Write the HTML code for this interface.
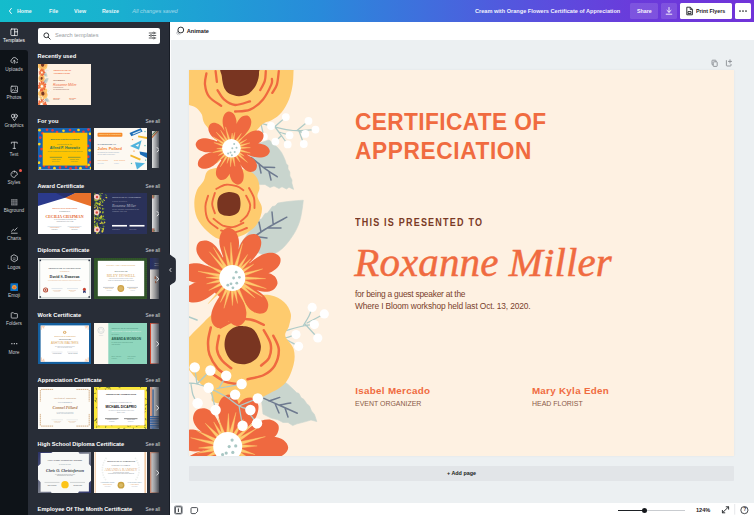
<!DOCTYPE html>
<html lang="en">
<head>
<meta charset="utf-8">
<title>Cream with Orange Flowers Certificate of Appreciation</title>
<style>
*{box-sizing:border-box;margin:0;padding:0}
html,body{width:754px;height:515px;overflow:hidden;background:#ecf0f2;font-family:"Liberation Sans",sans-serif;}
body{position:relative}
#cert{position:absolute;left:189px;top:70.4px;width:545px;height:385.4px;background:#fef1e2;overflow:hidden;box-shadow:0 0 2px rgba(0,0,0,.06)}
#cert div{position:absolute;white-space:nowrap;line-height:1}
#cert #ci{left:0;top:-.4px;width:545px;height:386px}
#cert div{transform-origin:0 0}
#cert .t1{color:#f06b40;font-weight:bold}
#cert .t2{color:#7a3a26;font-weight:bold}
#cert .nm{color:#f06b40;font-style:italic;font-family:"Liberation Serif",serif;-webkit-text-stroke:.45px #f06b40}
#cert .bd{color:#7a3f2c}
#cert .sg{color:#f06b40;font-weight:bold}
#cert .rl{color:#8a5a48}
#addpage{position:absolute;left:189px;top:465.7px;width:545px;height:15.3px;background:#e2e5e8;border-radius:1px;text-align:center;font-size:5.4px;line-height:15px;color:#1a1d21;font-weight:bold}

#topbar{position:absolute;left:0;top:0;width:754px;height:21.5px;background:linear-gradient(90deg,#14bccc 0%,#19b2cf 14%,#1f9fd5 28%,#288bda 42%,#3f6fdd 56%,#5752de 70%,#6a3bdb 84%,#7033d9 100%);color:#fff;font-size:5.6px;font-weight:bold}
#topbar span.w{opacity:.9}
#topbar span{position:absolute;top:7px;line-height:8px;white-space:nowrap;transform-origin:0 50%;transform:scaleX(.95)}
#topbar .btn{position:absolute;top:3px;height:15.5px;border-radius:1.5px}
#canvasbar{position:absolute;left:170px;top:21.5px;width:584px;height:18.8px;background:#fff}
#canvasbar span{position:absolute;left:16.7px;top:5.2px;font-size:5.65px;line-height:8px;font-weight:bold;color:#1d2024}
#bottom{position:absolute;left:169.8px;top:502.6px;width:585px;height:12.4px;background:#fff}
#bottom span{position:absolute;left:527px;top:4px;font-size:5.6px;line-height:7px;color:#1d2024;font-weight:bold;transform-origin:0 50%}
#vline{position:absolute;left:169.8px;top:40px;width:1.4px;height:463px;background:#fdfdfe}

#rail{position:absolute;left:0;top:21.5px;width:28px;height:493.5px;background:#0e1318}
#rail .act{position:absolute;left:0;top:0;width:28px;height:28px;background:#282d37}
#rail .crn{position:absolute;left:0;top:28px;width:28px;height:10px;background:#0e1318;border-top-right-radius:3px;box-shadow:0 -3px 0 0 #282d37}
#rail .ic{position:absolute;left:9.7px}
#rail .it{position:absolute;left:0;width:28px;text-align:center;color:#c9ccd0;font-size:4.8px;line-height:6px;white-space:nowrap}
#rail .it.on{color:#fff}
#rail .dot{position:absolute;left:19px;top:147.2px;width:3px;height:3px;border-radius:50%;background:#f2584c}
#panel{position:absolute;left:28px;top:21.5px;width:141.8px;height:493.5px;background:#282d37;overflow:hidden;border-right:1.6px solid #171c25}
#search{position:absolute;left:9.5px;top:6.3px;width:122.5px;height:16px;background:#fff;border-radius:2px}
#search span{position:absolute;left:17.5px;top:4.6px;font-size:5.6px;line-height:7px;color:#9a9da3;white-space:nowrap}
.sec{position:absolute;left:9.6px;color:#fff;font-size:5.7px;font-weight:bold;line-height:7px;white-space:nowrap}
.seeall{position:absolute;left:117.6px;color:#d4d7db;font-size:4.75px;line-height:7px;white-space:nowrap}
.th{position:absolute;width:53.5px;height:41.4px;overflow:hidden;background:#fff}
.th svg{display:block}
.th3{width:7.6px;height:37px;background:none}
</style>
</head>
<body>
<div id="topbar">
<svg width="10" height="10" viewBox="0 0 10 10" style="position:absolute;left:6px;top:6px"><path d="M5.4,2.4L3.4,5L5.4,7.6" fill="none" stroke="#fff" stroke-width="1" stroke-linecap="round" stroke-linejoin="round" opacity=".9"/></svg>
<span class="w" style="left:17px">Home</span>
<span class="w" style="left:49px">File</span>
<span class="w" style="left:74px">View</span>
<span class="w" style="left:102px">Resize</span>
<span style="left:132.3px;font-weight:normal;font-style:italic;opacity:.55;transform:none">All changes saved</span>
<span style="left:475px;opacity:.92;transform:none">Cream with Orange Flowers Certificate of Appreciation</span>
<div class="btn" style="left:630px;width:28px;background:rgba(255,255,255,.13)"></div>
<span style="left:636.6px;opacity:.95">Share</span>
<div class="btn" style="left:661.3px;width:16px;background:rgba(255,255,255,.13)"></div>
<svg width="10" height="10" viewBox="0 0 10 10" style="position:absolute;left:664.3px;top:5.8px"><path d="M5,1.5V6.2M3,4.4L5,6.3L7,4.4M2.2,8.2H7.8" fill="none" stroke="#fff" stroke-width="0.9" stroke-linecap="round" stroke-linejoin="round"/></svg>
<div class="btn" style="left:680px;width:52px;background:#fff"></div>
<svg width="9" height="10" viewBox="0 0 9 10" style="position:absolute;left:684.5px;top:5.8px"><path d="M1.8,1.2H5.4L7.4,3.2V8.8H1.8ZM5.2,1.4V3.4H7.2M3,5.6H6V7.6H3Z" fill="none" stroke="#1d2024" stroke-width="0.9" stroke-linejoin="round"/></svg>
<span style="left:696px;color:#1d2024">Print Flyers</span>
<div class="btn" style="left:735px;width:15.8px;background:#fff"></div>
<svg width="10" height="4" viewBox="0 0 10 4" style="position:absolute;left:738px;top:8.8px"><circle cx="2" cy="2" r=".85" fill="#1d2024"/><circle cx="5" cy="2" r=".85" fill="#1d2024"/><circle cx="8" cy="2" r=".85" fill="#1d2024"/></svg>
</div>
<svg width="0" height="0" style="position:absolute"><defs><linearGradient id="fade" x1="0" y1="0" x2="1" y2="0"><stop offset="0" stop-color="#282d37" stop-opacity=".06"/><stop offset=".5" stop-color="#3a3f48" stop-opacity=".45"/><stop offset="1" stop-color="#282d37" stop-opacity=".85"/></linearGradient></defs></svg>
<div id="rail"><div class="act"></div><div class="crn"></div>
<svg class="ic" width="8.6" height="8.6" viewBox="0 0 10 10" style="top:6.5px"><rect x="1" y="1.2" width="8" height="7.6" rx="1" fill="none" stroke="#fff" stroke-width=".9" stroke-linecap="round" stroke-linejoin="round"/><path d="M5.4,1.4V8.6M5.4,4.4H8.8" fill="none" stroke="#fff" stroke-width=".9" stroke-linecap="round" stroke-linejoin="round"/></svg>
<div class="it on" style="top:16.01px">Templates</div>
<svg class="ic" width="8.6" height="8.6" viewBox="0 0 10 10" style="top:34.8px"><path d="M3,7.8H2.8A2,2 0 0 1 2.4,3.9A2.8,2.8 0 0 1 7.8,3.6A2.1,2.1 0 0 1 7.4,7.8H7M5,8.6V5M3.7,6.2L5,4.9L6.3,6.2" fill="none" stroke="#d3d6da" stroke-width=".9" stroke-linecap="round" stroke-linejoin="round"/></svg>
<div class="it" style="top:45.01px">Uploads</div>
<svg class="ic" width="8.6" height="8.6" viewBox="0 0 10 10" style="top:63.1px"><rect x="1.2" y="1.4" width="7.6" height="7.2" rx="1" fill="none" stroke="#d3d6da" stroke-width=".9" stroke-linecap="round" stroke-linejoin="round"/><path d="M1.6,7.4L3.8,5.2L5.4,6.8L6.6,5.8L8.6,7.6" fill="none" stroke="#d3d6da" stroke-width=".9" stroke-linecap="round" stroke-linejoin="round"/><circle cx="6.4" cy="3.6" r=".7" fill="#d3d6da"/></svg>
<div class="it" style="top:73.01px">Photos</div>
<svg class="ic" width="8.6" height="8.6" viewBox="0 0 10 10" style="top:91.4px"><circle cx="3.6" cy="3.4" r="2" fill="none" stroke="#d3d6da" stroke-width=".9" stroke-linecap="round" stroke-linejoin="round"/><circle cx="6.6" cy="3.4" r="2" fill="none" stroke="#d3d6da" stroke-width=".9" stroke-linecap="round" stroke-linejoin="round"/><path d="M2.6,5.4L5.1,9L7.6,5.4" fill="none" stroke="#d3d6da" stroke-width=".9" stroke-linecap="round" stroke-linejoin="round"/></svg>
<div class="it" style="top:101.01px">Graphics</div>
<svg class="ic" width="8.6" height="8.6" viewBox="0 0 10 10" style="top:119.7px"><path d="M1.6,2.8V1.4H8.4V2.8M5,1.4V8.6M3.6,8.6H6.4" fill="none" stroke="#d3d6da" stroke-width=".9" stroke-linecap="round" stroke-linejoin="round"/></svg>
<div class="it" style="top:130.01px">Text</div>
<svg class="ic" width="8.6" height="8.6" viewBox="0 0 10 10" style="top:148px"><path d="M5,1.4A3.6,3.6 0 1 0 5.6,8.5C6.6,8.3 5.6,7 6.6,6.4C7.4,6 8.6,6.4 8.6,4.8A3.6,3.6 0 0 0 5,1.4Z" fill="none" stroke="#d3d6da" stroke-width=".9" stroke-linecap="round" stroke-linejoin="round"/><circle cx="3.4" cy="4" r=".5" fill="#d3d6da"/><circle cx="5.2" cy="3" r=".5" fill="#d3d6da"/></svg>
<div class="it" style="top:158.01px">Styles</div>
<svg class="ic" width="8.6" height="8.6" viewBox="0 0 10 10" style="top:176.3px"><rect x="1.4" y="1.4" width="7.2" height="7.2" fill="#9a9da2"/><path d="M1.4,3.2H8.6M1.4,5H8.6M1.4,6.8H8.6M3.2,1.4V8.6M5,1.4V8.6M6.8,1.4V8.6" stroke="#0e1318" stroke-width=".5"/></svg>
<div class="it" style="top:186.01px">Bkground</div>
<svg class="ic" width="8.6" height="8.6" viewBox="0 0 10 10" style="top:204.6px"><path d="M1.6,6.2L3.8,4L5.4,5.2L8.2,2.2M1.6,8.4H8.4" fill="none" stroke="#d3d6da" stroke-width=".9" stroke-linecap="round" stroke-linejoin="round"/></svg>
<div class="it" style="top:214.01px">Charts</div>
<svg class="ic" width="8.6" height="8.6" viewBox="0 0 10 10" style="top:232.9px"><path d="M5,1L8.6,3V7L5,9L1.4,7V3Z" fill="none" stroke="#d3d6da" stroke-width=".9" stroke-linecap="round" stroke-linejoin="round"/><path d="M3.4,5.6A1.7,1.4 0 0 0 6.6,5.6M3.4,4.6H6.6" fill="none" stroke="#d3d6da" stroke-width=".6"/></svg>
<div class="it" style="top:243.01px">Logos</div>
<svg class="ic" width="8.6" height="8.6" viewBox="0 0 10 10" style="top:261.2px"><rect x=".4" y=".4" width="9.2" height="9.2" rx=".8" fill="#0b6fc2"/><circle cx="5" cy="5" r="2.7" fill="#f2a23a"/><circle cx="5" cy="5.2" r="1.5" fill="#e0703a"/></svg>
<div class="it" style="top:271.01px">Emoji</div>
<svg class="ic" width="8.6" height="8.6" viewBox="0 0 10 10" style="top:289.5px"><path d="M1.4,2.6Q1.4,2 2,2H4L4.9,3H8Q8.6,3 8.6,3.6V7.6Q8.6,8.2 8,8.2H2Q1.4,8.2 1.4,7.6Z" fill="none" stroke="#d3d6da" stroke-width=".9" stroke-linecap="round" stroke-linejoin="round"/></svg>
<div class="it" style="top:299.01px">Folders</div>
<svg class="ic" width="8.6" height="8.6" viewBox="0 0 10 10" style="top:317.8px"><circle cx="2.2" cy="5.4" r=".8" fill="#d3d6da"/><circle cx="5" cy="5.4" r=".8" fill="#d3d6da"/><circle cx="7.8" cy="5.4" r=".8" fill="#d3d6da"/></svg>
<div class="it" style="top:328.01px">More</div>
<div class="dot"></div>
</div>
<div id="panel">
<div id="search"><svg width="8" height="8" viewBox="0 0 8 8" style="position:absolute;left:5.8px;top:4.3px"><circle cx="3.3" cy="3.3" r="2.4" fill="none" stroke="#1d2024" stroke-width=".9"/><path d="M5.2,5.2L7.2,7.2" stroke="#1d2024" stroke-width=".9" stroke-linecap="round"/></svg><span>Search templates</span><svg width="9" height="9" viewBox="0 0 9 9" style="position:absolute;left:110.6px;top:3.6px"><path d="M.8,2H8.2M.8,4.5H8.2M.8,7H8.2" stroke="#1d2024" stroke-width=".7"/><circle cx="5.8" cy="2" r=".9" fill="#fff" stroke="#1d2024" stroke-width=".6"/><circle cx="3" cy="4.5" r=".9" fill="#fff" stroke="#1d2024" stroke-width=".6"/><circle cx="5.8" cy="7" r=".9" fill="#fff" stroke="#1d2024" stroke-width=".6"/></svg></div>
<div class="sec" style="top:31.22px">Recently used</div>
<div class="th" style="left:9.5px;top:42.2px"><svg width="53.5" height="41.4" viewBox="0 0 545 386" preserveAspectRatio="none" font-family='"Liberation Sans",sans-serif'><rect width="545" height="386" fill="#fef1e2"/><g transform="scale(.93 1)"><use href="#fl"/><text x="170" y="63" font-size="21" fill="#f06b40" textLength="196" lengthAdjust="spacingAndGlyphs" font-weight="bold">CERTIFICATE OF</text><text x="170" y="90" font-size="21" fill="#f06b40" textLength="180" lengthAdjust="spacingAndGlyphs" font-weight="bold">APPRECIATION</text><text x="166.3" y="155.8" font-size="10" fill="#7a3a26" textLength="127" lengthAdjust="spacingAndGlyphs" font-weight="bold">THIS IS PRESENTED TO</text><text x="165" y="205.8" font-size="37" fill="#f06b40" textLength="257" lengthAdjust="spacingAndGlyphs" font-style="italic">Roxanne Miller</text><text x="166" y="226.6" font-size="8.4" fill="#7a3f2c" textLength="111" lengthAdjust="spacingAndGlyphs">for being a guest speaker at the</text><text x="166" y="238.7" font-size="8.4" fill="#7a3f2c" textLength="176" lengthAdjust="spacingAndGlyphs">Where I Bloom workshop held last Oct. 13, 2020.</text><text x="166.3" y="324.9" font-size="9.8" fill="#f06b40" textLength="74.5" lengthAdjust="spacingAndGlyphs" font-weight="bold">Isabel Mercado</text><text x="166.3" y="336.4" font-size="7.7" fill="#8a5a48" textLength="66" lengthAdjust="spacingAndGlyphs">EVENT ORGANIZER</text><text x="342.9" y="324.9" font-size="9.8" fill="#f06b40" textLength="75.5" lengthAdjust="spacingAndGlyphs" font-weight="bold">Mary Kyla Eden</text><text x="342.9" y="336.4" font-size="7.7" fill="#8a5a48" textLength="51" lengthAdjust="spacingAndGlyphs">HEAD FLORIST</text></g></svg></div>
<div class="sec" style="top:96.22px">For you</div>
<div class="seeall" style="top:96.05px">See all</div>
<div class="th" style="left:9.5px;top:106.9px"><svg width="53.5" height="41.4" viewBox="0 0 53.5 41.2" preserveAspectRatio="none"><rect x="0" y="0" width="53.5" height="41.4" fill="#1763b3"/><circle cx="1.5" cy="2.2" r="1.35" fill="#ffd321"/><circle cx="9" cy="1.8" r="1.35" fill="#e8383b"/><circle cx="14.5" cy="2.3" r="1.35" fill="#e8383b"/><circle cx="25.5" cy="2.8" r="1.35" fill="#ffd321"/><circle cx="32" cy="2" r="1.35" fill="#e8383b"/><circle cx="40.5" cy="2" r="1.35" fill="#ffd321"/><circle cx="45.5" cy="3.8" r="1.35" fill="#e8383b"/><circle cx="50.5" cy="1.6" r="1.35" fill="#e8383b"/><circle cx="19" cy="4" r="1.35" fill="#e8383b"/><circle cx="36" cy="4.2" r="1.35" fill="#e8383b"/><circle cx="2" cy="39.8" r="1.35" fill="#ffd321"/><circle cx="6" cy="37.6" r="1.35" fill="#e8383b"/><circle cx="11" cy="39.2" r="1.35" fill="#e8383b"/><circle cx="16.5" cy="40" r="1.35" fill="#ffd321"/><circle cx="22" cy="39.5" r="1.35" fill="#e8383b"/><circle cx="28" cy="38.6" r="1.35" fill="#e8383b"/><circle cx="32.5" cy="40.2" r="1.35" fill="#e8383b"/><circle cx="38" cy="39.5" r="1.35" fill="#e8383b"/><circle cx="42.5" cy="40" r="1.35" fill="#ffd321"/><circle cx="48.5" cy="38.5" r="1.35" fill="#e8383b"/><circle cx="53" cy="39.8" r="1.35" fill="#ffd321"/><circle cx="2.3" cy="9.5" r="1.35" fill="#e8383b"/><circle cx="1.3" cy="16" r="1.35" fill="#ffd321"/><circle cx="3.6" cy="21" r="1.35" fill="#e8383b"/><circle cx="2.4" cy="28" r="1.35" fill="#e8383b"/><circle cx="1" cy="34.5" r="1.35" fill="#ffd321"/><circle cx="4.6" cy="5.2" r="1.35" fill="#e8383b"/><circle cx="52" cy="5.8" r="1.35" fill="#ffd321"/><circle cx="52.2" cy="12.3" r="1.35" fill="#e8383b"/><circle cx="50" cy="17.8" r="1.35" fill="#e8383b"/><circle cx="51.6" cy="22.3" r="1.35" fill="#ffd321"/><circle cx="50.2" cy="28.5" r="1.35" fill="#e8383b"/><circle cx="52.4" cy="34" r="1.35" fill="#e8383b"/><circle cx="50.6" cy="36.8" r="1.35" fill="#ffd321"/><rect x="4.7" y="4.7" width="44.7" height="32.7" fill="#ffc502"/><text x="12.5" y="12.4" font-size="2.2" fill="#23705f" font-family='"Liberation Sans",sans-serif' textLength="29" lengthAdjust="spacingAndGlyphs" font-weight="bold">Business Practices Seminar</text><text x="19" y="16.6" font-size="1.6" fill="#23705f" font-family='"Liberation Sans",sans-serif' textLength="15" lengthAdjust="spacingAndGlyphs" opacity="0.7">presented to</text><text x="11.8" y="21.2" font-size="3.6" fill="#23705f" font-family='"Liberation Sans",sans-serif' textLength="30.2" lengthAdjust="spacingAndGlyphs" font-weight="bold">Alfred P. Horowitz</text><text x="9.5" y="24.3" font-size="1.5" fill="#23705f" font-family='"Liberation Sans",sans-serif' textLength="35" lengthAdjust="spacingAndGlyphs" opacity="0.7">for the successful completion of this seminar</text><path d="M11.8,29.2H24" stroke="#23705f" stroke-width="0.5"/><path d="M30,29.2H42.5" stroke="#23705f" stroke-width="0.5"/><text x="13.5" y="31.6" font-size="1.5" fill="#23705f" font-family='"Liberation Sans",sans-serif' textLength="9" lengthAdjust="spacingAndGlyphs" opacity="0.8">Hugo Scott</text><text x="14" y="33.6" font-size="1.3" fill="#23705f" font-family='"Liberation Sans",sans-serif' textLength="7.5" lengthAdjust="spacingAndGlyphs" opacity="0.6">Director</text><text x="31.5" y="31.6" font-size="1.5" fill="#23705f" font-family='"Liberation Sans",sans-serif' textLength="9.5" lengthAdjust="spacingAndGlyphs" opacity="0.8">Miriam Cruz</text><text x="32.5" y="33.6" font-size="1.3" fill="#23705f" font-family='"Liberation Sans",sans-serif' textLength="7.5" lengthAdjust="spacingAndGlyphs" opacity="0.6">Manager</text></svg></div>
<div class="th" style="left:65.7px;top:106.9px"><svg width="53.5" height="41.4" viewBox="0 0 53.5 41.2" preserveAspectRatio="none"><rect x="0" y="0" width="53.5" height="41.4" fill="#fdf9f2"/><rect x="3.5" y="4.8" width="24.9" height="3.8" fill="#f58a2c" rx="1"/><text x="5" y="7.3" font-size="1.7" fill="#ffe3a8" font-family='"Liberation Sans",sans-serif' textLength="22" lengthAdjust="spacingAndGlyphs" font-weight="bold">CERTIFICATE OF COMPLETION</text><text x="3.5" y="16.5" font-size="1.9" fill="#6c8091" font-family='"Liberation Sans",sans-serif' textLength="18.5" lengthAdjust="spacingAndGlyphs" font-weight="bold">IS PRESENTED TO</text><text x="3.5" y="22.3" font-size="4" fill="#f5842a" font-family='"Liberation Sans",sans-serif' textLength="24.5" lengthAdjust="spacingAndGlyphs" font-weight="bold">Jules Pollard</text><text x="3.5" y="24.9" font-size="1.4" fill="#9bb0c4" font-family='"Liberation Sans",sans-serif' textLength="21.5" lengthAdjust="spacingAndGlyphs">for finishing the training program</text><text x="3.5" y="26.7" font-size="1.4" fill="#9bb0c4" font-family='"Liberation Sans",sans-serif' textLength="17.5" lengthAdjust="spacingAndGlyphs">held last February</text><text x="3.5" y="32.6" font-size="1.4" fill="#f5a05a" font-family='"Liberation Sans",sans-serif' textLength="10.5" lengthAdjust="spacingAndGlyphs">Jiara Martins</text><text x="3.5" y="35.6" font-size="1.3" fill="#a9c3e0" font-family='"Liberation Sans",sans-serif' textLength="6.5" lengthAdjust="spacingAndGlyphs">Director</text><text x="20" y="32.6" font-size="1.4" fill="#f5a05a" font-family='"Liberation Sans",sans-serif' textLength="11" lengthAdjust="spacingAndGlyphs">Juan Carlos</text><text x="20" y="35.6" font-size="1.3" fill="#a9c3e0" font-family='"Liberation Sans",sans-serif' textLength="5" lengthAdjust="spacingAndGlyphs">Trainer</text><polygon points="35.5,5 46.8,0.2 48.6,3.4 37.3,8.2" fill="#1e6db5"/><polygon points="38.5,5.4 46.5,2.2 47,3.2 39,6.4" fill="#d9ecf8"/><polygon points="44.3,7.4 53.5,9 53.5,11 44,9.2" fill="#f2b72d"/><polygon points="36,18 47.6,12.2 45,21.6" fill="#4fb3dd"/><polygon points="41.5,17.5 45,15.8 44.2,18.6" fill="#fdf9f2"/><polygon points="45.5,23.4 53.5,24.6 53.5,30 46.2,26.4" fill="#1e6db5"/><polygon points="36.7,26.3 46.8,30.6 46,32.4 36.2,28.2" fill="#f2b72d"/><polygon points="41,34.2 51,35 43,41.2" fill="#4fb3dd"/><rect x="37.9" y="10.9" width="1.2" height="1.2" fill="#f5a05a"/><rect x="39.4" y="22.4" width="1.2" height="1.2" fill="#f5a05a"/><rect x="50.4" y="2.9" width="1.2" height="1.2" fill="#5bb8b0"/><rect x="50.4" y="16.9" width="1.2" height="1.2" fill="#5bb8b0"/><rect x="51" y="31.4" width="1.2" height="1.2" fill="#5bb8b0"/><rect x="36.9" y="34.7" width="1.2" height="1.2" fill="#5bb8b0"/></svg></div>
<div class="th th3" style="left:123.7px;top:109.1px;width:7.6px;height:37px"><svg width="7.6" height="37" viewBox="0 0 7.6 37"><rect x="0" y="0" width="7.6" height="37" fill="#ececec"/><polygon points="0,5.6 5.2,0 6.6,0 0,7.2" fill="#e8712b"/><polygon points="0,3.6 3.4,0 4.4,0 0,4.8" fill="#4a7a3a"/><rect width="7.6" height="37" fill="url(#fade)"/><path d="M5.1,16.5L7.1,18.7L5.1,20.9" fill="none" stroke="#fff" stroke-width=".8" stroke-linecap="round" stroke-linejoin="round"/></svg></div>
<div class="sec" style="top:161.22px">Award Certificate</div>
<div class="seeall" style="top:161.05px">See all</div>
<div class="th" style="left:9.5px;top:171.6px"><svg width="53.5" height="41.4" viewBox="0 0 53.5 41.2" preserveAspectRatio="none"><rect x="0" y="0" width="53.5" height="41.4" fill="#ffffff"/><polygon points="0,0 37,0 27,4.7 0,13" fill="#2b3a8c"/><polygon points="37,0 53.5,0 53.5,13.3 27,4.7" fill="#e8712b"/><polygon points="18,0 37,0 27,4.7" fill="#26306e"/><text x="14" y="16" font-size="1.7" fill="#e4652a" font-family='"Liberation Sans",sans-serif' textLength="25" lengthAdjust="spacingAndGlyphs" font-weight="bold" opacity="0.85">CERTIFICATE OF EXCELLENCE</text><text x="21" y="19.2" font-size="1.5" fill="#4a4f58" font-family='"Liberation Sans",sans-serif' textLength="11" lengthAdjust="spacingAndGlyphs" opacity="0.8">is awarded to</text><text x="7.4" y="25.1" font-size="4.1" fill="#e4652a" font-family='"Liberation Serif",serif' textLength="38.1" lengthAdjust="spacingAndGlyphs" font-weight="bold">CECILIA CHAPMAN</text><text x="16" y="27.2" font-size="1.3" fill="#8b8f96" font-family='"Liberation Sans",sans-serif' textLength="22" lengthAdjust="spacingAndGlyphs">for her outstanding performance and</text><text x="18.5" y="28.8" font-size="1.3" fill="#8b8f96" font-family='"Liberation Sans",sans-serif' textLength="17" lengthAdjust="spacingAndGlyphs">contribution to the team</text><path d="M9.5,33.4H23.5" stroke="#9fb3c8" stroke-width="0.35"/><path d="M29.5,33.4H43.5" stroke="#9fb3c8" stroke-width="0.35"/><text x="11.5" y="35.3" font-size="1.4" fill="#e4652a" font-family='"Liberation Sans",sans-serif' textLength="10" lengthAdjust="spacingAndGlyphs" opacity="0.8">Adora Montminy</text><text x="13.5" y="37" font-size="1.2" fill="#8b8f96" font-family='"Liberation Sans",sans-serif' textLength="6" lengthAdjust="spacingAndGlyphs">Manager</text><text x="31.5" y="35.3" font-size="1.4" fill="#e4652a" font-family='"Liberation Sans",sans-serif' textLength="10" lengthAdjust="spacingAndGlyphs" opacity="0.8">Hannah Morales</text><text x="33.5" y="37" font-size="1.2" fill="#8b8f96" font-family='"Liberation Sans",sans-serif' textLength="6" lengthAdjust="spacingAndGlyphs">Director</text></svg></div>
<div class="th" style="left:65.7px;top:171.6px"><svg width="53.5" height="41.4" viewBox="0 0 53.5 41.2" preserveAspectRatio="none"><rect x="0" y="0" width="53.5" height="41.4" fill="#2a3159"/><ellipse cx="4.3" cy="18.45" rx="1.13" ry="0.6" fill="#3f6b34" transform="rotate(150 4.3 18.45)"/><ellipse cx="7.49" cy="7.17" rx="1.24" ry="0.72" fill="#5e8a34" transform="rotate(24 7.49 7.17)"/><ellipse cx="0.73" cy="18.2" rx="1.37" ry="0.68" fill="#d8d23a" transform="rotate(10 0.73 18.2)"/><ellipse cx="2.89" cy="24.6" rx="1.26" ry="0.65" fill="#5e8a34" transform="rotate(40 2.89 24.6)"/><ellipse cx="7.89" cy="25.79" rx="0.84" ry="0.48" fill="#c9cf2f" transform="rotate(61 7.89 25.79)"/><ellipse cx="6.98" cy="24.78" rx="1.11" ry="0.74" fill="#e3d53a" transform="rotate(132 6.98 24.78)"/><ellipse cx="1.88" cy="9.05" rx="1.26" ry="0.58" fill="#c9cf2f" transform="rotate(71 1.88 9.05)"/><ellipse cx="4.55" cy="16.49" rx="0.86" ry="0.5" fill="#3f6b34" transform="rotate(58 4.55 16.49)"/><ellipse cx="0.09" cy="21.05" rx="1.34" ry="0.56" fill="#d8d23a" transform="rotate(74 0.09 21.05)"/><ellipse cx="9.65" cy="15.62" rx="1.28" ry="0.49" fill="#3f6b34" transform="rotate(13 9.65 15.62)"/><ellipse cx="8.74" cy="19.21" rx="1.09" ry="0.63" fill="#5e8a34" transform="rotate(50 8.74 19.21)"/><ellipse cx="1.93" cy="32.48" rx="1.02" ry="0.41" fill="#c9cf2f" transform="rotate(104 1.93 32.48)"/><ellipse cx="0.67" cy="31.6" rx="1.29" ry="0.4" fill="#8fa82e" transform="rotate(119 0.67 31.6)"/><ellipse cx="1.1" cy="33.27" rx="0.93" ry="0.6" fill="#d8d23a" transform="rotate(33 1.1 33.27)"/><ellipse cx="2.78" cy="17.03" rx="1.09" ry="0.49" fill="#5e8a34" transform="rotate(69 2.78 17.03)"/><ellipse cx="9.06" cy="36.17" rx="1.01" ry="0.75" fill="#d8d23a" transform="rotate(53 9.06 36.17)"/><ellipse cx="9.98" cy="7.05" rx="1.25" ry="0.44" fill="#d8d23a" transform="rotate(37 9.98 7.05)"/><ellipse cx="1.61" cy="8.17" rx="1.23" ry="0.73" fill="#3f6b34" transform="rotate(98 1.61 8.17)"/><ellipse cx="0.6" cy="2.16" rx="1.25" ry="0.41" fill="#d8d23a" transform="rotate(94 0.6 2.16)"/><ellipse cx="3.71" cy="14.98" rx="1.14" ry="0.63" fill="#d8d23a" transform="rotate(98 3.71 14.98)"/><ellipse cx="0.9" cy="6.86" rx="1.37" ry="0.5" fill="#8fa82e" transform="rotate(48 0.9 6.86)"/><ellipse cx="6.25" cy="5.81" rx="0.94" ry="0.78" fill="#d8d23a" transform="rotate(123 6.25 5.81)"/><ellipse cx="3.17" cy="24.95" rx="0.88" ry="0.6" fill="#c9cf2f" transform="rotate(65 3.17 24.95)"/><ellipse cx="5.85" cy="9.25" rx="1.09" ry="0.76" fill="#e3d53a" transform="rotate(125 5.85 9.25)"/><ellipse cx="1.03" cy="11.62" rx="1.48" ry="0.45" fill="#a9b830" transform="rotate(122 1.03 11.62)"/><ellipse cx="7.45" cy="23.05" rx="0.85" ry="0.48" fill="#d8d23a" transform="rotate(52 7.45 23.05)"/><ellipse cx="0.34" cy="31.21" rx="1.11" ry="0.42" fill="#5e8a34" transform="rotate(45 0.34 31.21)"/><ellipse cx="4.27" cy="11.12" rx="0.86" ry="0.46" fill="#8fa82e" transform="rotate(115 4.27 11.12)"/><ellipse cx="4.97" cy="41.16" rx="1.17" ry="0.78" fill="#a9b830" transform="rotate(151 4.97 41.16)"/><ellipse cx="0.06" cy="0.51" rx="1.29" ry="0.79" fill="#e3d53a" transform="rotate(5 0.06 0.51)"/><ellipse cx="0.33" cy="24.73" rx="1.31" ry="0.53" fill="#c9cf2f" transform="rotate(18 0.33 24.73)"/><ellipse cx="6.26" cy="2.24" rx="0.83" ry="0.77" fill="#a9b830" transform="rotate(180 6.26 2.24)"/><ellipse cx="12.39" cy="4.57" rx="1.05" ry="0.67" fill="#e3d53a" transform="rotate(19 12.39 4.57)"/><ellipse cx="2.98" cy="36.46" rx="0.82" ry="0.6" fill="#3f6b34" transform="rotate(3 2.98 36.46)"/><ellipse cx="2.88" cy="25.87" rx="0.81" ry="0.43" fill="#d8d23a" transform="rotate(23 2.88 25.87)"/><ellipse cx="10.19" cy="26.49" rx="1.31" ry="0.56" fill="#5e8a34" transform="rotate(177 10.19 26.49)"/><ellipse cx="3.24" cy="23.98" rx="1.18" ry="0.61" fill="#3f6b34" transform="rotate(131 3.24 23.98)"/><ellipse cx="5.94" cy="0.28" rx="0.82" ry="0.78" fill="#5e8a34" transform="rotate(28 5.94 0.28)"/><ellipse cx="4.7" cy="20.38" rx="0.98" ry="0.4" fill="#5e8a34" transform="rotate(77 4.7 20.38)"/><ellipse cx="6.48" cy="5.16" rx="0.92" ry="0.76" fill="#d8d23a" transform="rotate(168 6.48 5.16)"/><ellipse cx="3.54" cy="39" rx="1.03" ry="0.67" fill="#8fa82e" transform="rotate(50 3.54 39)"/><ellipse cx="7.68" cy="26.27" rx="1.44" ry="0.75" fill="#3f6b34" transform="rotate(98 7.68 26.27)"/><ellipse cx="8.34" cy="8.44" rx="0.9" ry="0.6" fill="#8fa82e" transform="rotate(10 8.34 8.44)"/><ellipse cx="10.28" cy="29.58" rx="1.38" ry="0.45" fill="#e3d53a" transform="rotate(120 10.28 29.58)"/><ellipse cx="1.29" cy="10.83" rx="1.07" ry="0.61" fill="#5e8a34" transform="rotate(172 1.29 10.83)"/><ellipse cx="8.17" cy="12.56" rx="1.12" ry="0.43" fill="#d8d23a" transform="rotate(8 8.17 12.56)"/><ellipse cx="5.05" cy="10.96" rx="1.3" ry="0.63" fill="#a9b830" transform="rotate(79 5.05 10.96)"/><ellipse cx="4.95" cy="26.92" rx="0.9" ry="0.58" fill="#a9b830" transform="rotate(6 4.95 26.92)"/><ellipse cx="1.92" cy="32.08" rx="0.9" ry="0.42" fill="#3f6b34" transform="rotate(161 1.92 32.08)"/><ellipse cx="0.76" cy="3.96" rx="1.26" ry="0.72" fill="#d8d23a" transform="rotate(19 0.76 3.96)"/><ellipse cx="1.33" cy="28.43" rx="0.98" ry="0.69" fill="#5e8a34" transform="rotate(120 1.33 28.43)"/><ellipse cx="0.12" cy="22" rx="0.99" ry="0.54" fill="#8fa82e" transform="rotate(178 0.12 22)"/><ellipse cx="3.53" cy="39.71" rx="0.91" ry="0.74" fill="#3f6b34" transform="rotate(179 3.53 39.71)"/><ellipse cx="0.37" cy="37.97" rx="1.07" ry="0.58" fill="#a9b830" transform="rotate(50 0.37 37.97)"/><ellipse cx="8.91" cy="25.9" rx="1.19" ry="0.66" fill="#5e8a34" transform="rotate(128 8.91 25.9)"/><ellipse cx="9.62" cy="33.26" rx="1.03" ry="0.79" fill="#5e8a34" transform="rotate(25 9.62 33.26)"/><ellipse cx="8.48" cy="30.04" rx="1.45" ry="0.45" fill="#a9b830" transform="rotate(62 8.48 30.04)"/><ellipse cx="8.75" cy="37.7" rx="1.18" ry="0.72" fill="#e3d53a" transform="rotate(82 8.75 37.7)"/><ellipse cx="6.12" cy="10.26" rx="1.04" ry="0.43" fill="#c9cf2f" transform="rotate(112 6.12 10.26)"/><ellipse cx="3.41" cy="13.71" rx="1.14" ry="0.41" fill="#e3d53a" transform="rotate(16 3.41 13.71)"/><ellipse cx="0.12" cy="17.44" rx="1.03" ry="0.72" fill="#d8d23a" transform="rotate(35 0.12 17.44)"/><ellipse cx="8.96" cy="19.23" rx="1.16" ry="0.67" fill="#a9b830" transform="rotate(112 8.96 19.23)"/><ellipse cx="3.46" cy="39.67" rx="0.86" ry="0.49" fill="#a9b830" transform="rotate(134 3.46 39.67)"/><ellipse cx="7.2" cy="23.03" rx="1.25" ry="0.61" fill="#d8d23a" transform="rotate(143 7.2 23.03)"/><ellipse cx="5.57" cy="10.03" rx="1.41" ry="0.64" fill="#3f6b34" transform="rotate(77 5.57 10.03)"/><ellipse cx="9.16" cy="35.58" rx="0.99" ry="0.6" fill="#d8d23a" transform="rotate(105 9.16 35.58)"/><ellipse cx="3.67" cy="22.04" rx="1.06" ry="0.62" fill="#d8d23a" transform="rotate(11 3.67 22.04)"/><ellipse cx="2.7" cy="21.19" rx="1.49" ry="0.45" fill="#3f6b34" transform="rotate(23 2.7 21.19)"/><ellipse cx="0.32" cy="28.71" rx="1.12" ry="0.77" fill="#d8d23a" transform="rotate(103 0.32 28.71)"/><ellipse cx="3.6" cy="10.58" rx="1.04" ry="0.76" fill="#8fa82e" transform="rotate(121 3.6 10.58)"/><ellipse cx="0.5" cy="21.57" rx="1.23" ry="0.77" fill="#5e8a34" transform="rotate(33 0.5 21.57)"/><ellipse cx="10.63" cy="29.19" rx="0.94" ry="0.49" fill="#c9cf2f" transform="rotate(175 10.63 29.19)"/><ellipse cx="6.41" cy="11.22" rx="1.23" ry="0.44" fill="#8fa82e" transform="rotate(149 6.41 11.22)"/><ellipse cx="5.56" cy="4.28" rx="1.3" ry="0.68" fill="#e3d53a" transform="rotate(111 5.56 4.28)"/><ellipse cx="6.15" cy="-0" rx="1.17" ry="0.46" fill="#3f6b34" transform="rotate(52 6.15 -0)"/><ellipse cx="4.15" cy="36.15" rx="1.17" ry="0.74" fill="#8fa82e" transform="rotate(156 4.15 36.15)"/><ellipse cx="0.71" cy="24.23" rx="1.24" ry="0.54" fill="#a9b830" transform="rotate(46 0.71 24.23)"/><ellipse cx="2.29" cy="12.58" rx="0.95" ry="0.8" fill="#8fa82e" transform="rotate(24 2.29 12.58)"/><ellipse cx="1.99" cy="4.76" rx="0.86" ry="0.56" fill="#a9b830" transform="rotate(111 1.99 4.76)"/><ellipse cx="3.2" cy="34.78" rx="1.29" ry="0.48" fill="#3f6b34" transform="rotate(160 3.2 34.78)"/><ellipse cx="0.06" cy="28.46" rx="1.2" ry="0.54" fill="#8fa82e" transform="rotate(92 0.06 28.46)"/><ellipse cx="5.61" cy="3.96" rx="1.04" ry="0.8" fill="#3f6b34" transform="rotate(48 5.61 3.96)"/><ellipse cx="3.98" cy="33.52" rx="0.83" ry="0.62" fill="#c9cf2f" transform="rotate(131 3.98 33.52)"/><ellipse cx="3.45" cy="37.92" rx="0.93" ry="0.48" fill="#8fa82e" transform="rotate(40 3.45 37.92)"/><ellipse cx="7.76" cy="41.58" rx="1.21" ry="0.45" fill="#c9cf2f" transform="rotate(174 7.76 41.58)"/><ellipse cx="6.37" cy="18.87" rx="1.07" ry="0.57" fill="#e3d53a" transform="rotate(90 6.37 18.87)"/><ellipse cx="4.88" cy="17.49" rx="1.24" ry="0.42" fill="#c9cf2f" transform="rotate(51 4.88 17.49)"/><ellipse cx="3.68" cy="6.79" rx="1.06" ry="0.77" fill="#a9b830" transform="rotate(154 3.68 6.79)"/><ellipse cx="4.64" cy="6.1" rx="1.03" ry="0.43" fill="#c9cf2f" transform="rotate(180 4.64 6.1)"/><ellipse cx="8.15" cy="36.65" rx="1.2" ry="0.48" fill="#5e8a34" transform="rotate(149 8.15 36.65)"/><ellipse cx="6.47" cy="41.26" rx="1" ry="0.45" fill="#e3d53a" transform="rotate(40 6.47 41.26)"/><ellipse cx="3.12" cy="34.03" rx="1.42" ry="0.68" fill="#e3d53a" transform="rotate(110 3.12 34.03)"/><ellipse cx="3.33" cy="31.9" rx="0.93" ry="0.72" fill="#a9b830" transform="rotate(77 3.33 31.9)"/><ellipse cx="0.02" cy="19.16" rx="1.49" ry="0.76" fill="#e3d53a" transform="rotate(12 0.02 19.16)"/><ellipse cx="8.55" cy="8.98" rx="1.01" ry="0.49" fill="#a9b830" transform="rotate(103 8.55 8.98)"/><ellipse cx="4.1" cy="23.49" rx="1.16" ry="0.6" fill="#5e8a34" transform="rotate(54 4.1 23.49)"/><ellipse cx="7.69" cy="29.15" rx="0.82" ry="0.65" fill="#d8d23a" transform="rotate(60 7.69 29.15)"/><ellipse cx="2.85" cy="10.04" rx="1.33" ry="0.66" fill="#c9cf2f" transform="rotate(2 2.85 10.04)"/><ellipse cx="2.32" cy="3.23" rx="1.19" ry="0.6" fill="#e3d53a" transform="rotate(133 2.32 3.23)"/><ellipse cx="9.2" cy="23.42" rx="1.11" ry="0.66" fill="#a9b830" transform="rotate(140 9.2 23.42)"/><ellipse cx="6.74" cy="24.69" rx="1.07" ry="0.78" fill="#c9cf2f" transform="rotate(98 6.74 24.69)"/><ellipse cx="0.89" cy="19.29" rx="1.18" ry="0.64" fill="#5e8a34" transform="rotate(109 0.89 19.29)"/><ellipse cx="2.82" cy="39.65" rx="1.08" ry="0.52" fill="#d8d23a" transform="rotate(135 2.82 39.65)"/><ellipse cx="5.65" cy="11.29" rx="1.45" ry="0.67" fill="#d8d23a" transform="rotate(75 5.65 11.29)"/><ellipse cx="8.11" cy="0.16" rx="0.83" ry="0.46" fill="#d8d23a" transform="rotate(175 8.11 0.16)"/><ellipse cx="8.82" cy="15.77" rx="1.08" ry="0.63" fill="#a9b830" transform="rotate(81 8.82 15.77)"/><ellipse cx="12.04" cy="2.16" rx="1.3" ry="0.5" fill="#5e8a34" transform="rotate(62 12.04 2.16)"/><ellipse cx="0.61" cy="0.95" rx="1.31" ry="0.59" fill="#3f6b34" transform="rotate(62 0.61 0.95)"/><ellipse cx="0.59" cy="24.96" rx="1.09" ry="0.45" fill="#d8d23a" transform="rotate(13 0.59 24.96)"/><ellipse cx="0.93" cy="14.34" rx="1.11" ry="0.67" fill="#e3d53a" transform="rotate(116 0.93 14.34)"/><ellipse cx="5.42" cy="24.85" rx="1.09" ry="0.71" fill="#a9b830" transform="rotate(135 5.42 24.85)"/><ellipse cx="0.76" cy="34.05" rx="1.31" ry="0.5" fill="#e3d53a" transform="rotate(29 0.76 34.05)"/><ellipse cx="1.92" cy="20.63" rx="1.24" ry="0.54" fill="#d8d23a" transform="rotate(69 1.92 20.63)"/><ellipse cx="6.47" cy="25.22" rx="1.21" ry="0.65" fill="#a9b830" transform="rotate(61 6.47 25.22)"/><ellipse cx="1.63" cy="7.16" rx="1.44" ry="0.75" fill="#a9b830" transform="rotate(10 1.63 7.16)"/><ellipse cx="0.02" cy="26.02" rx="1.1" ry="0.65" fill="#e3d53a" transform="rotate(26 0.02 26.02)"/><ellipse cx="1.75" cy="8.57" rx="0.86" ry="0.67" fill="#3f6b34" transform="rotate(140 1.75 8.57)"/><ellipse cx="8.99" cy="9.09" rx="1.13" ry="0.48" fill="#5e8a34" transform="rotate(87 8.99 9.09)"/><ellipse cx="0.65" cy="20.26" rx="0.85" ry="0.45" fill="#3f6b34" transform="rotate(159 0.65 20.26)"/><ellipse cx="6.92" cy="35.03" rx="1.1" ry="0.5" fill="#5e8a34" transform="rotate(38 6.92 35.03)"/><ellipse cx="5.99" cy="14.86" rx="1.03" ry="0.62" fill="#d8d23a" transform="rotate(47 5.99 14.86)"/><ellipse cx="2.6" cy="17.39" rx="1.12" ry="0.53" fill="#c9cf2f" transform="rotate(139 2.6 17.39)"/><ellipse cx="6.61" cy="2.57" rx="1.37" ry="0.59" fill="#5e8a34" transform="rotate(2 6.61 2.57)"/><ellipse cx="1.85" cy="2.27" rx="1.22" ry="0.68" fill="#a9b830" transform="rotate(126 1.85 2.27)"/><ellipse cx="6.84" cy="30.17" rx="1.42" ry="0.49" fill="#e3d53a" transform="rotate(168 6.84 30.17)"/><ellipse cx="2.98" cy="30.22" rx="1.03" ry="0.58" fill="#c9cf2f" transform="rotate(152 2.98 30.22)"/><ellipse cx="8.15" cy="38.5" rx="1.11" ry="0.72" fill="#e3d53a" transform="rotate(78 8.15 38.5)"/><ellipse cx="1.28" cy="18.71" rx="1.43" ry="0.5" fill="#a9b830" transform="rotate(92 1.28 18.71)"/><ellipse cx="0.08" cy="34.63" rx="1.08" ry="0.56" fill="#a9b830" transform="rotate(49 0.08 34.63)"/><ellipse cx="2.99" cy="30.77" rx="1.18" ry="0.73" fill="#5e8a34" transform="rotate(144 2.99 30.77)"/><circle cx="2.8" cy="3.8" r="2.9" fill="#f7cfc4"/><circle cx="3" cy="4" r="1.2" fill="#d9483f"/><circle cx="2.6" cy="19.2" r="2.9" fill="#f7cfc4"/><circle cx="2.8" cy="19.4" r="1.2" fill="#d9483f"/><circle cx="3" cy="36.4" r="2.9" fill="#f7cfc4"/><circle cx="3.2" cy="36.6" r="1.2" fill="#d9483f"/><text x="18" y="5" font-size="1.7" fill="#c3c7d6" font-family='"Liberation Sans",sans-serif' textLength="29" lengthAdjust="spacingAndGlyphs" font-weight="bold" opacity="0.8">CERTIFICATE OF ACHIEVEMENT</text><text x="18" y="9.4" font-size="1.3" fill="#c3c7d6" font-family='"Liberation Sans",sans-serif' textLength="15" lengthAdjust="spacingAndGlyphs" opacity="0.6">is proudly presented to</text><text x="18" y="14.3" font-size="3.7" fill="#c3c7d6" font-family='"Liberation Serif",serif' textLength="24" lengthAdjust="spacingAndGlyphs" font-style="italic" opacity="0.85">Roxanne Miller</text><text x="18" y="17" font-size="1.3" fill="#c3c7d6" font-family='"Liberation Sans",sans-serif' textLength="27" lengthAdjust="spacingAndGlyphs" opacity="0.65">for her valuable contribution to the</text><text x="18" y="18.9" font-size="1.3" fill="#c3c7d6" font-family='"Liberation Sans",sans-serif' textLength="15" lengthAdjust="spacingAndGlyphs" opacity="0.65">company this year</text><rect x="18" y="31.8" width="15" height="1.6" fill="#ffffff"/><rect x="35.5" y="31.8" width="15" height="1.6" fill="#ffffff"/><text x="18" y="36.6" font-size="1.4" fill="#c3c7d6" font-family='"Liberation Sans",sans-serif' textLength="8" lengthAdjust="spacingAndGlyphs" opacity="0.6">Manager</text><text x="35.5" y="36.6" font-size="1.4" fill="#c3c7d6" font-family='"Liberation Sans",sans-serif' textLength="7" lengthAdjust="spacingAndGlyphs" opacity="0.6">Director</text></svg></div>
<div class="th th3" style="left:123.7px;top:173.8px;width:7.6px;height:37px"><svg width="7.6" height="37" viewBox="0 0 7.6 37"><rect x="0" y="0" width="7.6" height="37" fill="#efefef"/><rect x="0" y="0" width="2.3" height="3.4" fill="#c9806a"/><rect x="0" y="33.4" width="2.6" height="3.6" fill="#c9806a"/><circle cx="1.9" cy="1" r="0.7" fill="#6a9a4a"/><circle cx="2.1" cy="35.6" r="0.7" fill="#6a9a4a"/><rect width="7.6" height="37" fill="url(#fade)"/><path d="M5.1,16.5L7.1,18.7L5.1,20.9" fill="none" stroke="#fff" stroke-width=".8" stroke-linecap="round" stroke-linejoin="round"/></svg></div>
<div class="sec" style="top:225.22px">Diploma Certificate</div>
<div class="seeall" style="top:225.05px">See all</div>
<div class="th" style="left:9.5px;top:236.3px"><svg width="53.5" height="41.4" viewBox="0 0 53.5 41.2" preserveAspectRatio="none"><rect x="0" y="0" width="53.5" height="41.4" fill="#ffffff"/><rect x="1.5" y="1.5" width="50.5" height="38.2" fill="#fdfdfb" stroke="#cdd4d2" stroke-width="1.5"/><rect x="1.55" y="1.65" width="1.5" height="1.5" fill="#2b3445"/><rect x="50.45" y="1.65" width="1.5" height="1.5" fill="#2b3445"/><rect x="1.55" y="38.05" width="1.5" height="1.5" fill="#2b3445"/><rect x="50.45" y="38.05" width="1.5" height="1.5" fill="#2b3445"/><text x="10.5" y="10.6" font-size="2" fill="#3a454d" font-family='"Liberation Sans",sans-serif' textLength="32" lengthAdjust="spacingAndGlyphs" font-weight="bold" opacity="0.85">CERTIFICATE OF GRADUATION</text><text x="22" y="14.3" font-size="1.3" fill="#e0a070" font-family='"Liberation Sans",sans-serif' textLength="9.5" lengthAdjust="spacingAndGlyphs">is awarded to</text><text x="11.6" y="19.7" font-size="4" fill="#2f363e" font-family='"Liberation Serif",serif' textLength="29.9" lengthAdjust="spacingAndGlyphs" font-weight="bold">David S. Donovan</text><text x="10" y="23.3" font-size="1.2" fill="#e8b48c" font-family='"Liberation Sans",sans-serif' textLength="33" lengthAdjust="spacingAndGlyphs">for completing all the academic requirements of the</text><path d="M13.5,30.4H24.5" stroke="#9fb3c8" stroke-width="0.3"/><path d="M29,30.4H40" stroke="#9fb3c8" stroke-width="0.3"/><text x="15" y="32.6" font-size="1.3" fill="#e0a070" font-family='"Liberation Sans",sans-serif' textLength="8" lengthAdjust="spacingAndGlyphs">Kyrie Petrakis</text><text x="16" y="34.3" font-size="1.2" fill="#e8c4a8" font-family='"Liberation Sans",sans-serif' textLength="6" lengthAdjust="spacingAndGlyphs">Principal</text><text x="31" y="32.6" font-size="1.3" fill="#e0a070" font-family='"Liberation Sans",sans-serif' textLength="7" lengthAdjust="spacingAndGlyphs">Drew Feig</text><text x="32.5" y="34.3" font-size="1.2" fill="#e8c4a8" font-family='"Liberation Sans",sans-serif' textLength="4" lengthAdjust="spacingAndGlyphs">Dean</text><circle cx="7.6" cy="31.8" r="2.5" fill="#b5452f"/><circle cx="7.6" cy="31.8" r="1.6" fill="#f7ece6"/><circle cx="7.6" cy="31.8" r="0.9" fill="#b5452f"/><polygon points="45.3,32 47.5,32 47.8,35 46.4,34 45,35" fill="#26306e"/><circle cx="46.4" cy="31" r="1.5" fill="#c9402f"/></svg></div>
<div class="th" style="left:65.7px;top:236.3px"><svg width="53.5" height="41.4" viewBox="0 0 53.5 41.2" preserveAspectRatio="none"><rect x="0" y="0" width="53.5" height="41.4" fill="#2f5228"/><rect x="1.2" y="1" width="51" height="39.2" fill="none" stroke="#3d6434" stroke-width=".6" stroke-dasharray="1 1"/><rect x="3.8" y="2.8" width="46.4" height="35.2" fill="#ffffff"/><text x="12.5" y="7.7" font-size="1.9" fill="#dba960" font-family='"Liberation Sans",sans-serif' textLength="28.5" lengthAdjust="spacingAndGlyphs" opacity="0.9">DIPLOMA FOR HOME STUDIES</text><text x="20.5" y="13.7" font-size="1.3" fill="#3a4a42" font-family='"Liberation Sans",sans-serif' textLength="13" lengthAdjust="spacingAndGlyphs">this is to certify that</text><text x="12.7" y="18.7" font-size="3.7" fill="#dba960" font-family='"Liberation Serif",serif' textLength="28.8" lengthAdjust="spacingAndGlyphs">RILEY HOWELL</text><text x="15" y="21.2" font-size="1.2" fill="#9aa3ad" font-family='"Liberation Sans",sans-serif' textLength="24" lengthAdjust="spacingAndGlyphs">has completed the prescribed course of study</text><text x="14" y="22.9" font-size="1.2" fill="#9aa3ad" font-family='"Liberation Sans",sans-serif' textLength="26" lengthAdjust="spacingAndGlyphs">and is awarded this diploma</text><circle cx="26.8" cy="30.4" r="3.4" fill="#cfa247"/><circle cx="26.8" cy="30.4" r="2.3" fill="#d9b566"/><path d="M9,29.3H20" stroke="#4a5568" stroke-width="0.3"/><path d="M33,29.3H44" stroke="#4a5568" stroke-width="0.3"/><text x="11" y="31.3" font-size="1.3" fill="#dba960" font-family='"Liberation Sans",sans-serif' textLength="8" lengthAdjust="spacingAndGlyphs">Jonas Hoffman</text><text x="12.5" y="33" font-size="1.1" fill="#b8bec6" font-family='"Liberation Sans",sans-serif' textLength="5" lengthAdjust="spacingAndGlyphs">Teacher</text><text x="35" y="31.3" font-size="1.3" fill="#dba960" font-family='"Liberation Sans",sans-serif' textLength="7.5" lengthAdjust="spacingAndGlyphs">Ella Marie</text><text x="36.5" y="33" font-size="1.1" fill="#b8bec6" font-family='"Liberation Sans",sans-serif' textLength="4.5" lengthAdjust="spacingAndGlyphs">Parent</text></svg></div>
<div class="th th3" style="left:122px;top:236.3px;width:9.3px;height:41.4px"><svg width="9.3" height="41.4" viewBox="0 0 9.3 41.4"><rect x="0" y="0" width="9.3" height="41.4" fill="#f1ece6"/><rect x="0" y="0" width="9.3" height="11.4" fill="#27306a"/><text x="4.4" y="5.8" font-size="1.9" fill="#e8e8f0" font-family='"Liberation Sans",sans-serif' textLength="4.6" lengthAdjust="spacingAndGlyphs" font-weight="bold">CERT</text><text x="4.4" y="8.4" font-size="1.9" fill="#e8e8f0" font-family='"Liberation Sans",sans-serif' textLength="4.6" lengthAdjust="spacingAndGlyphs" font-weight="bold">DIPL</text><rect x="4.6" y="18.4" width="1.4" height="2.6" fill="#e0703a"/><rect x="5" y="23" width="1.4" height="2.2" fill="#e0703a"/><rect width="9.3" height="41.4" fill="url(#fade)"/><path d="M6.8,18.7L8.8,20.9L6.8,23.1" fill="none" stroke="#fff" stroke-width=".8" stroke-linecap="round" stroke-linejoin="round"/></svg></div>
<div class="sec" style="top:290.22px">Work Certificate</div>
<div class="seeall" style="top:290.05px">See all</div>
<div class="th" style="left:9.5px;top:301px"><svg width="53.5" height="41.4" viewBox="0 0 53.5 41.2" preserveAspectRatio="none"><rect x="0" y="0" width="53.5" height="41.4" fill="#15609f"/><rect x="2.6" y="2.4" width="48.4" height="36.3" fill="#ffffff"/><path d="M3.4,3.2h3.6M3.4,3.2v3.6M4.3,4.1h1.4v1.4" stroke="#f3a06b" stroke-width=".5" fill="none"/><path d="M50.2,3.2h-3.6M50.2,3.2v3.6M49.3,4.1h-1.4v1.4" stroke="#f3a06b" stroke-width=".5" fill="none"/><path d="M3.4,37.9h3.6M3.4,37.9v-3.6M4.3,37h1.4v-1.4" stroke="#f3a06b" stroke-width=".5" fill="none"/><path d="M50.2,37.9h-3.6M50.2,37.9v-3.6M49.3,37h-1.4v-1.4" stroke="#f3a06b" stroke-width=".5" fill="none"/><circle cx="26.7" cy="9.2" r="1.6" fill="#dba960"/><circle cx="26.7" cy="9.2" r="0.7" fill="#fff"/><text x="16" y="14.1" font-size="1.7" fill="#dba960" font-family='"Liberation Sans",sans-serif' textLength="21.5" lengthAdjust="spacingAndGlyphs" font-weight="bold" opacity="0.9">CERTIFICATE OF COMPLETION</text><text x="21" y="16.9" font-size="1.3" fill="#3a454d" font-family='"Liberation Sans",sans-serif' textLength="12" lengthAdjust="spacingAndGlyphs">this certifies that</text><text x="13" y="21.1" font-size="3.3" fill="#dba960" font-family='"Liberation Sans",sans-serif' textLength="27.5" lengthAdjust="spacingAndGlyphs">ASHTON WALTERS</text><text x="17" y="23.5" font-size="1.1" fill="#9aa3ad" font-family='"Liberation Sans",sans-serif' textLength="19.5" lengthAdjust="spacingAndGlyphs">has completed the work immersion program</text><text x="19.5" y="24.8" font-size="1.1" fill="#9aa3ad" font-family='"Liberation Sans",sans-serif' textLength="14.5" lengthAdjust="spacingAndGlyphs">held at the main office</text><path d="M13.5,28.9H24.5" stroke="#b8bec6" stroke-width="0.3"/><path d="M29,28.9H40" stroke="#b8bec6" stroke-width="0.3"/><text x="14.5" y="30.8" font-size="1.3" fill="#4a5568" font-family='"Liberation Sans",sans-serif' textLength="9" lengthAdjust="spacingAndGlyphs" opacity="0.8">Henrietta Mitchell</text><text x="30" y="30.8" font-size="1.3" fill="#4a5568" font-family='"Liberation Sans",sans-serif' textLength="9.5" lengthAdjust="spacingAndGlyphs" opacity="0.8">Marceline Anderson</text></svg></div>
<div class="th" style="left:65.7px;top:301px"><svg width="53.5" height="41.4" viewBox="0 0 53.5 41.2" preserveAspectRatio="none"><rect x="0" y="0" width="53.5" height="41.4" fill="#8fd6bd"/><rect x="0" y="0" width="14.3" height="41.4" fill="#fdf9f1"/><circle cx="7" cy="7.3" r="3.1" fill="none" stroke="#c3c9cd" stroke-width=".6"/><circle cx="7" cy="7.3" r="1.7" fill="none" stroke="#d3d8db" stroke-width=".5"/><text x="5" y="13" font-size="1.2" fill="#c3c9cd" font-family='"Liberation Sans",sans-serif' textLength="4.2" lengthAdjust="spacingAndGlyphs">COMPANY</text><text x="17.5" y="6.1" font-size="1.9" fill="#2e6f5a" font-family='"Liberation Sans",sans-serif' textLength="26.5" lengthAdjust="spacingAndGlyphs" opacity="0.75">CERTIFICATE OF COMPLETION</text><text x="17.5" y="9.1" font-size="1.3" fill="#e6f6ef" font-family='"Liberation Sans",sans-serif' textLength="29.5" lengthAdjust="spacingAndGlyphs" opacity="0.9">this certificate is proudly awarded to</text><text x="17.5" y="11.9" font-size="1.3" fill="#2e6f5a" font-family='"Liberation Sans",sans-serif' textLength="7.5" lengthAdjust="spacingAndGlyphs" opacity="0.6">the bearer</text><text x="17.5" y="17.1" font-size="3.5" fill="#245a48" font-family='"Liberation Sans",sans-serif' textLength="29.5" lengthAdjust="spacingAndGlyphs" font-weight="bold">AMANDA MONSON</text><text x="17.5" y="19.9" font-size="1.3" fill="#2e6f5a" font-family='"Liberation Sans",sans-serif' textLength="21.5" lengthAdjust="spacingAndGlyphs" opacity="0.6">for completing the onboarding program</text><text x="17.5" y="21.5" font-size="1.3" fill="#2e6f5a" font-family='"Liberation Sans",sans-serif' textLength="8.5" lengthAdjust="spacingAndGlyphs" opacity="0.6">last month</text><text x="17.5" y="33.9" font-size="1.4" fill="#2e6f5a" font-family='"Liberation Sans",sans-serif' textLength="9.5" lengthAdjust="spacingAndGlyphs" opacity="0.6">Riley Nixon</text><text x="17.5" y="36.3" font-size="1.3" fill="#2e6f5a" font-family='"Liberation Sans",sans-serif' textLength="5.5" lengthAdjust="spacingAndGlyphs" opacity="0.5">Manager</text><text x="33.5" y="33.9" font-size="1.4" fill="#2e6f5a" font-family='"Liberation Sans",sans-serif' textLength="8" lengthAdjust="spacingAndGlyphs" opacity="0.6">Kim Chun</text><text x="33.5" y="36.3" font-size="1.3" fill="#2e6f5a" font-family='"Liberation Sans",sans-serif' textLength="6" lengthAdjust="spacingAndGlyphs" opacity="0.5">Director</text></svg></div>
<div class="th th3" style="left:122px;top:301px;width:9.3px;height:41.4px"><svg width="9.3" height="41.4" viewBox="0 0 9.3 41.4"><rect x="0" y="0" width="9.3" height="41.4" fill="#f3f3f3"/><rect x="0" y="0" width="1.1" height="41.4" fill="#e0482c"/><rect x="0" y="0" width="9.3" height="0.8" fill="#e0482c"/><rect x="0" y="40.4" width="9.3" height="1" fill="#e0482c"/><rect width="9.3" height="41.4" fill="url(#fade)"/><path d="M6.8,18.7L8.8,20.9L6.8,23.1" fill="none" stroke="#fff" stroke-width=".8" stroke-linecap="round" stroke-linejoin="round"/></svg></div>
<div class="sec" style="top:355.22px">Appreciation Certificate</div>
<div class="seeall" style="top:355.05px">See all</div>
<div class="th" style="left:9.5px;top:365.7px"><svg width="53.5" height="41.4" viewBox="0 0 53.5 41.2" preserveAspectRatio="none"><rect x="0" y="0" width="53.5" height="41.4" fill="#fdfcf8"/><path d="M3.1,2.4h12M2.3,3v11.5" stroke="#cfa77c" stroke-width=".9" stroke-dasharray="1.6 .5" fill="none"/><path d="M50.4,2.4h-12M51.2,3v11.5" stroke="#cfa77c" stroke-width=".9" stroke-dasharray="1.6 .5" fill="none"/><path d="M3.1,38.9h12M2.3,38.3v-11.5" stroke="#cfa77c" stroke-width=".9" stroke-dasharray="1.6 .5" fill="none"/><path d="M50.4,38.9h-12M51.2,38.3v-11.5" stroke="#cfa77c" stroke-width=".9" stroke-dasharray="1.6 .5" fill="none"/><text x="16" y="11.7" font-size="2.6" fill="#b9875a" font-family='"Liberation Serif",serif' textLength="22" lengthAdjust="spacingAndGlyphs" font-style="italic">Certificate of Appreciation</text><text x="20" y="16" font-size="1.3" fill="#7f9bb0" font-family='"Liberation Sans",sans-serif' textLength="14" lengthAdjust="spacingAndGlyphs">THIS IS PRESENTED TO</text><text x="14.5" y="22" font-size="4.4" fill="#b07a52" font-family='"Liberation Serif",serif' textLength="25" lengthAdjust="spacingAndGlyphs" font-weight="bold" font-style="italic">Connel Pillard</text><text x="18.5" y="25.4" font-size="1.2" fill="#9fb0c0" font-family='"Liberation Sans",sans-serif' textLength="17" lengthAdjust="spacingAndGlyphs">in recognition of his dedication</text><text x="18.5" y="26.8" font-size="1.2" fill="#9fb0c0" font-family='"Liberation Sans",sans-serif' textLength="17" lengthAdjust="spacingAndGlyphs">and commitment</text><path d="M13.5,32.6H25" stroke="#c5ccd3" stroke-width="0.3"/><path d="M28.5,32.6H40" stroke="#c5ccd3" stroke-width="0.3"/><text x="15.5" y="34.5" font-size="1.3" fill="#d9b08a" font-family='"Liberation Sans",sans-serif' textLength="7.5" lengthAdjust="spacingAndGlyphs">Aaron Loeb</text><text x="16.5" y="36.2" font-size="1.2" fill="#e0c4a8" font-family='"Liberation Sans",sans-serif' textLength="5.5" lengthAdjust="spacingAndGlyphs">President</text><text x="30.5" y="34.5" font-size="1.3" fill="#d9b08a" font-family='"Liberation Sans",sans-serif' textLength="7.5" lengthAdjust="spacingAndGlyphs">Bailey Dupont</text><text x="31.5" y="36.2" font-size="1.2" fill="#e0c4a8" font-family='"Liberation Sans",sans-serif' textLength="5.5" lengthAdjust="spacingAndGlyphs">Secretary</text></svg></div>
<div class="th" style="left:65.7px;top:365.7px"><svg width="53.5" height="41.4" viewBox="0 0 53.5 41.2" preserveAspectRatio="none"><rect x="0" y="0" width="53.5" height="41.4" fill="#fbe93a"/><ellipse cx="12.63" cy="0.27" rx="1.08" ry=".45" fill="#5a6424" opacity=".75" transform="rotate(39 12.63 0.27)"/><ellipse cx="4.82" cy="38.46" rx="1.18" ry=".45" fill="#5a6424" opacity=".75" transform="rotate(74 4.82 38.46)"/><ellipse cx="2.56" cy="31.52" rx="0.96" ry=".45" fill="#5a6424" opacity=".75" transform="rotate(137 2.56 31.52)"/><ellipse cx="51.64" cy="32.13" rx="1.38" ry=".45" fill="#5a6424" opacity=".75" transform="rotate(67 51.64 32.13)"/><ellipse cx="11.47" cy="2.41" rx="1.38" ry=".45" fill="#5a6424" opacity=".75" transform="rotate(66 11.47 2.41)"/><ellipse cx="42.82" cy="38.94" rx="1.02" ry=".45" fill="#5a6424" opacity=".75" transform="rotate(160 42.82 38.94)"/><ellipse cx="2.78" cy="39.59" rx="1.39" ry=".45" fill="#5a6424" opacity=".75" transform="rotate(95 2.78 39.59)"/><ellipse cx="50.85" cy="24.96" rx="1.27" ry=".45" fill="#5a6424" opacity=".75" transform="rotate(129 50.85 24.96)"/><ellipse cx="13.31" cy="0.64" rx="1" ry=".45" fill="#5a6424" opacity=".75" transform="rotate(140 13.31 0.64)"/><ellipse cx="44.96" cy="38.42" rx="1" ry=".45" fill="#5a6424" opacity=".75" transform="rotate(180 44.96 38.42)"/><ellipse cx="2.82" cy="34.94" rx="1.16" ry=".45" fill="#5a6424" opacity=".75" transform="rotate(105 2.82 34.94)"/><ellipse cx="51.83" cy="11.87" rx="1.12" ry=".45" fill="#5a6424" opacity=".75" transform="rotate(59 51.83 11.87)"/><ellipse cx="16.32" cy="2.11" rx="0.83" ry=".45" fill="#5a6424" opacity=".75" transform="rotate(11 16.32 2.11)"/><ellipse cx="24.75" cy="41.19" rx="1.16" ry=".45" fill="#5a6424" opacity=".75" transform="rotate(165 24.75 41.19)"/><ellipse cx="1.51" cy="14.13" rx="1.5" ry=".45" fill="#5a6424" opacity=".75" transform="rotate(50 1.51 14.13)"/><ellipse cx="50.79" cy="37.64" rx="1.24" ry=".45" fill="#5a6424" opacity=".75" transform="rotate(112 50.79 37.64)"/><ellipse cx="14.78" cy="0.93" rx="1.32" ry=".45" fill="#5a6424" opacity=".75" transform="rotate(82 14.78 0.93)"/><ellipse cx="33.94" cy="38.96" rx="1.03" ry=".45" fill="#5a6424" opacity=".75" transform="rotate(15 33.94 38.96)"/><ellipse cx="2.27" cy="11.43" rx="1.21" ry=".45" fill="#5a6424" opacity=".75" transform="rotate(60 2.27 11.43)"/><ellipse cx="50.95" cy="38.5" rx="1" ry=".45" fill="#5a6424" opacity=".75" transform="rotate(6 50.95 38.5)"/><ellipse cx="2.29" cy="1.81" rx="1.43" ry=".45" fill="#5a6424" opacity=".75" transform="rotate(73 2.29 1.81)"/><ellipse cx="39.32" cy="41.09" rx="0.81" ry=".45" fill="#5a6424" opacity=".75" transform="rotate(73 39.32 41.09)"/><ellipse cx="1.03" cy="6.3" rx="1.26" ry=".45" fill="#5a6424" opacity=".75" transform="rotate(158 1.03 6.3)"/><ellipse cx="52.57" cy="3.2" rx="1.23" ry=".45" fill="#5a6424" opacity=".75" transform="rotate(113 52.57 3.2)"/><ellipse cx="15.62" cy="0.65" rx="1.22" ry=".45" fill="#5a6424" opacity=".75" transform="rotate(40 15.62 0.65)"/><ellipse cx="17.72" cy="38.43" rx="0.83" ry=".45" fill="#5a6424" opacity=".75" transform="rotate(43 17.72 38.43)"/><ellipse cx="1.17" cy="33.14" rx="1.5" ry=".45" fill="#5a6424" opacity=".75" transform="rotate(146 1.17 33.14)"/><ellipse cx="50.88" cy="40.45" rx="1.1" ry=".45" fill="#5a6424" opacity=".75" transform="rotate(53 50.88 40.45)"/><ellipse cx="6.08" cy="0.16" rx="1.32" ry=".45" fill="#5a6424" opacity=".75" transform="rotate(152 6.08 0.16)"/><ellipse cx="36.21" cy="38.82" rx="0.83" ry=".45" fill="#5a6424" opacity=".75" transform="rotate(125 36.21 38.82)"/><ellipse cx="1.86" cy="13.24" rx="0.82" ry=".45" fill="#5a6424" opacity=".75" transform="rotate(135 1.86 13.24)"/><ellipse cx="51.45" cy="41.07" rx="1.26" ry=".45" fill="#5a6424" opacity=".75" transform="rotate(51 51.45 41.07)"/><ellipse cx="25.56" cy="0.63" rx="1.09" ry=".45" fill="#5a6424" opacity=".75" transform="rotate(9 25.56 0.63)"/><ellipse cx="11.72" cy="39.64" rx="1.25" ry=".45" fill="#5a6424" opacity=".75" transform="rotate(109 11.72 39.64)"/><ellipse cx="2.66" cy="20.54" rx="0.82" ry=".45" fill="#5a6424" opacity=".75" transform="rotate(65 2.66 20.54)"/><ellipse cx="51.33" cy="21.66" rx="1.34" ry=".45" fill="#5a6424" opacity=".75" transform="rotate(106 51.33 21.66)"/><ellipse cx="46.53" cy="0.37" rx="0.84" ry=".45" fill="#5a6424" opacity=".75" transform="rotate(80 46.53 0.37)"/><ellipse cx="30.25" cy="41.17" rx="1.08" ry=".45" fill="#5a6424" opacity=".75" transform="rotate(167 30.25 41.17)"/><ellipse cx="2.09" cy="32.58" rx="1.32" ry=".45" fill="#5a6424" opacity=".75" transform="rotate(126 2.09 32.58)"/><ellipse cx="51.72" cy="17.72" rx="1.45" ry=".45" fill="#5a6424" opacity=".75" transform="rotate(146 51.72 17.72)"/><rect x="3.3" y="2.7" width="47.4" height="35.6" fill="#f7c9a8"/><rect x="3.8" y="3" width="46.5" height="35" fill="#ffffff"/><text x="12" y="8" font-size="2.2" fill="#1a1a1a" font-family='"Liberation Sans",sans-serif' textLength="30" lengthAdjust="spacingAndGlyphs" font-weight="bold">CERTIFICATE APPRECIATION</text><text x="16" y="15.9" font-size="1.4" fill="#9aa3ad" font-family='"Liberation Sans",sans-serif' textLength="21.5" lengthAdjust="spacingAndGlyphs">IS JUSTLY PRESENTED TO</text><text x="11.5" y="20.7" font-size="3.5" fill="#111111" font-family='"Liberation Sans",sans-serif' textLength="31" lengthAdjust="spacingAndGlyphs" font-weight="bold">MICHAEL DICAPRIO</text><text x="14.5" y="24.1" font-size="1.2" fill="#9aa3ad" font-family='"Liberation Sans",sans-serif' textLength="25.5" lengthAdjust="spacingAndGlyphs">for being a valued member of the team</text><text x="23" y="25.6" font-size="1.2" fill="#9aa3ad" font-family='"Liberation Sans",sans-serif' textLength="8" lengthAdjust="spacingAndGlyphs">this year</text><path d="M11,31.5H24.5" stroke="#222" stroke-width="0.5"/><path d="M30,31.5H43.5" stroke="#222" stroke-width="0.5"/><text x="13" y="33.3" font-size="1.2" fill="#6b7280" font-family='"Liberation Sans",sans-serif' textLength="9.5" lengthAdjust="spacingAndGlyphs">Sebastian Bennett</text><text x="15" y="34.7" font-size="1.1" fill="#9aa3ad" font-family='"Liberation Sans",sans-serif' textLength="5.5" lengthAdjust="spacingAndGlyphs">Manager</text><text x="33" y="33.3" font-size="1.2" fill="#6b7280" font-family='"Liberation Sans",sans-serif' textLength="8" lengthAdjust="spacingAndGlyphs">Chiaki Sato</text><text x="34" y="34.7" font-size="1.1" fill="#9aa3ad" font-family='"Liberation Sans",sans-serif' textLength="5.5" lengthAdjust="spacingAndGlyphs">Director</text></svg></div>
<div class="th th3" style="left:122px;top:365.7px;width:9.3px;height:41.4px"><svg width="9.3" height="41.4" viewBox="0 0 9.3 41.4"><rect x="0" y="0" width="9.3" height="41.4" fill="#f0f0f0"/><rect x="0" y="0" width="2.4" height="41.4" fill="#f2a888"/><rect x="2.4" y="2.4" width="1.3" height="41.4" fill="#3b6fb5"/><rect x="0" y="29" width="9.3" height="12.4" fill="#3b6fb5"/><rect x="0" y="30" width="9.3" height="0.8" fill="#e9c9c0" opacity=".7"/><rect x="0" y="32.4" width="9.3" height="0.8" fill="#e9c9c0" opacity=".7"/><rect x="0" y="34.8" width="9.3" height="0.8" fill="#e9c9c0" opacity=".7"/><rect x="0" y="37.2" width="9.3" height="0.8" fill="#e9c9c0" opacity=".7"/><rect x="0" y="39.6" width="9.3" height="0.8" fill="#e9c9c0" opacity=".7"/><rect width="9.3" height="41.4" fill="url(#fade)"/><path d="M6.8,18.7L8.8,20.9L6.8,23.1" fill="none" stroke="#fff" stroke-width=".8" stroke-linecap="round" stroke-linejoin="round"/></svg></div>
<div class="sec" style="top:419.22px">High School Diploma Certificate</div>
<div class="seeall" style="top:419.05px">See all</div>
<div class="th" style="left:9.5px;top:430.4px"><svg width="53.5" height="41.4" viewBox="0 0 53.5 41.2" preserveAspectRatio="none"><defs><linearGradient id="g6" x1="0" y1="0" x2="1" y2="1"><stop offset="0" stop-color="#2a3168"/><stop offset=".5" stop-color="#7b7f8c"/><stop offset="1" stop-color="#2a3168"/></linearGradient></defs><rect x="0" y="0" width="53.5" height="41.4" fill="url(#g6)"/><polygon points="2.6,1 13.3,1 14.6,0 40.4,0 41.6,1.8 50.9,1.8 50.9,12 53.5,14.6 53.5,28 50.9,30.6 50.9,39.2 41,39.2 39.8,41.2 14,41.2 12.8,39.6 2.6,39.6 2.6,30 0,27.4 0,14.2 2.6,11.6" fill="#f7f8f7"/><text x="9.5" y="9" font-size="2.4" fill="#464b55" font-family='"Liberation Serif",serif' textLength="34.5" lengthAdjust="spacingAndGlyphs" font-style="italic">High School Graduation Diploma</text><text x="21" y="13.3" font-size="1.2" fill="#8b9aa8" font-family='"Liberation Sans",sans-serif' textLength="12" lengthAdjust="spacingAndGlyphs">is conferred upon</text><text x="8" y="19.6" font-size="4.3" fill="#3a3f4a" font-family='"Liberation Serif",serif' textLength="38" lengthAdjust="spacingAndGlyphs" font-weight="bold" font-style="italic">Chris O. Christoferson</text><text x="17" y="22.9" font-size="1.1" fill="#7a8087" font-family='"Liberation Sans",sans-serif' textLength="20" lengthAdjust="spacingAndGlyphs">for completing the required course of study</text><text x="19" y="24.2" font-size="1.1" fill="#7a8087" font-family='"Liberation Sans",sans-serif' textLength="16" lengthAdjust="spacingAndGlyphs">prescribed by the board</text><path d="M6.5,30.3H21.5" stroke="#8a9097" stroke-width="0.35"/><path d="M32,30.3H47" stroke="#8a9097" stroke-width="0.35"/><text x="9.5" y="33.4" font-size="1.5" fill="#4a4f58" font-family='"Liberation Sans",sans-serif' textLength="9" lengthAdjust="spacingAndGlyphs">Jamie Chastain</text><text x="35.5" y="33.4" font-size="1.5" fill="#4a4f58" font-family='"Liberation Sans",sans-serif' textLength="8.5" lengthAdjust="spacingAndGlyphs">Benjamin Shah</text><circle cx="27" cy="32.5" r="3.7" fill="#fcc419"/></svg></div>
<div class="th" style="left:65.7px;top:430.4px"><svg width="53.5" height="41.4" viewBox="0 0 53.5 41.2" preserveAspectRatio="none"><rect x="0" y="0" width="53.5" height="41.4" fill="#ffffff"/><rect x="0.6" y="0" width="1.2" height="41.4" fill="#f3cba6"/><rect x="50.4" y="0" width="1.7" height="41.4" fill="#f3cba6"/><path d="M12,28C7,22 7,12 13,5M41.5,28C46.5,22 46.5,12 40.5,5" fill="none" stroke="#eef0ee" stroke-width="1.6" stroke-dasharray="1.5 1"/><text x="13" y="9.9" font-size="2.1" fill="#3a3f45" font-family='"Liberation Sans",sans-serif' textLength="28" lengthAdjust="spacingAndGlyphs" font-weight="bold" opacity="0.85">CERTIFICATE OF COMPLETION</text><text x="17.5" y="13.5" font-size="1.2" fill="#6b7280" font-family='"Liberation Sans",sans-serif' textLength="18.5" lengthAdjust="spacingAndGlyphs">THIS DIPLOMA IS AWARDED TO</text><text x="10.5" y="18.7" font-size="3.6" fill="#e3ab78" font-family='"Liberation Serif",serif' textLength="33" lengthAdjust="spacingAndGlyphs">AMANDA RAMSEY</text><text x="19" y="20.5" font-size="1.2" fill="#8b9097" font-family='"Liberation Sans",sans-serif' textLength="16" lengthAdjust="spacingAndGlyphs">for completing the course</text><text x="14" y="22.2" font-size="1.2" fill="#8b9097" font-family='"Liberation Sans",sans-serif' textLength="26" lengthAdjust="spacingAndGlyphs">prescribed for senior high school students</text><circle cx="27" cy="33" r="3.4" fill="#c9a140"/><circle cx="27" cy="33" r="2" fill="#d8b964"/><text x="6.5" y="31.2" font-size="1.4" fill="#7f9bb0" font-family='"Liberation Sans",sans-serif' textLength="14" lengthAdjust="spacingAndGlyphs">Headmaster Name</text><text x="9" y="32.8" font-size="1.2" fill="#e3ab78" font-family='"Liberation Sans",sans-serif' textLength="9" lengthAdjust="spacingAndGlyphs">Principal</text><text x="10.5" y="34.6" font-size="1.1" fill="#b8bec6" font-family='"Liberation Sans",sans-serif' textLength="6" lengthAdjust="spacingAndGlyphs">date signed</text><text x="33.5" y="31.2" font-size="1.4" fill="#7f9bb0" font-family='"Liberation Sans",sans-serif' textLength="14" lengthAdjust="spacingAndGlyphs">Head Teacher Name</text><text x="36" y="32.8" font-size="1.2" fill="#e3ab78" font-family='"Liberation Sans",sans-serif' textLength="9" lengthAdjust="spacingAndGlyphs">Adviser</text><text x="37.5" y="34.6" font-size="1.1" fill="#b8bec6" font-family='"Liberation Sans",sans-serif' textLength="6" lengthAdjust="spacingAndGlyphs">date signed</text></svg></div>
<div class="th th3" style="left:122px;top:430.4px;width:9.3px;height:41.4px"><svg width="9.3" height="41.4" viewBox="0 0 9.3 41.4"><rect x="0" y="0" width="9.3" height="41.4" fill="#e6e6e6"/><rect x="0" y="0" width="1.4" height="41.4" fill="#d9957a"/><rect x="0" y="0" width="9.3" height="1.2" fill="#d9957a"/><rect x="0" y="40.2" width="9.3" height="1.2" fill="#d9957a"/><rect width="9.3" height="41.4" fill="url(#fade)"/><path d="M6.8,18.7L8.8,20.9L6.8,23.1" fill="none" stroke="#fff" stroke-width=".8" stroke-linecap="round" stroke-linejoin="round"/></svg></div>
<div class="sec" style="top:484.22px">Employee Of The Month Certificate</div>
<div class="seeall" style="top:484.05px">See all</div>
</div>
<svg width="8" height="38" viewBox="0 0 8 38" style="position:absolute;left:168.6px;top:251px;z-index:3"><path d="M0,0C0,3 1.4,4.2 3.6,5.4C5.8,6.6 6.9,7.6 6.9,10V28C6.9,30.4 5.8,31.4 3.6,32.6C1.4,33.8 0,35 0,38Z" fill="#282d37"/><path d="M2,17.4L.6,19L2,20.6" fill="none" stroke="#fff" stroke-width=".8" stroke-linecap="round" stroke-linejoin="round"/></svg>
<div id="canvasbar">
<svg width="10" height="10" viewBox="0 0 10 10" style="position:absolute;left:4.5px;top:4.2px"><circle cx="5.8" cy="4" r="2.9" fill="#fff" stroke="#1d2024" stroke-width=".9"/><path d="M2.6,4.6A2.9,2.9 0 0 0 5.2,8.2" fill="none" stroke="#8a8e94" stroke-width=".8"/><path d="M1.6,6.2A2.4,2.4 0 0 0 3.6,8.9" fill="none" stroke="#b5b8bd" stroke-width=".7"/></svg>
<span>Animate</span>
</div>
<div id="vline"></div>
<svg width="30" height="10" viewBox="0 0 30 10" style="position:absolute;left:708.3px;top:58px"><path d="M4.6,2.2H7.4Q8,2.2 8,2.8V6.2Q8,6.8 7.4,6.8H4.6Q4,6.8 4,6.2V2.8Q4,2.2 4.6,2.2Z" fill="none" stroke="#7d8288" stroke-width=".8"/><path d="M5.8,3.8H8.6Q9.2,3.8 9.2,4.4V7.8Q9.2,8.4 8.6,8.4H5.8Q5.2,8.4 5.2,7.8V4.4Q5.2,3.8 5.8,3.8Z" fill="#ecf0f2" stroke="#7d8288" stroke-width=".8"/><path d="M18.4,2.6V7.4Q18.4,8 19,8H22.4Q23,8 23,7.4V6.4M20.4,3.4H23.6M22,1.8V5" fill="none" stroke="#7d8288" stroke-width=".8" stroke-linecap="round"/></svg>
<div id="cert"><div id="ci">
<svg width="545" height="386" viewBox="0 0 545 386" style="position:absolute;left:0;top:0"><g id="fl">
<path fill="#c9d5ce" stroke="#c9d5ce" stroke-width=".6" stroke-linejoin="round" d="M80,70C86,74 90,79 92.5,82.4C95,87 96.5,90.5 97.2,93.6L99,95.5L99,99L100.9,102L100.9,106L103,110L102.8,113L104.6,119.4L100,117.2L97.5,119L93,116.8L90,118.5L85,116L81,117.5L76,114.5L70.3,114.6L60,100L62,76Z M114.3,130.2C113.5,138 112.5,144 111.1,149.8C109,157 106,163 100,171C94,179 88,184 78,186L50,176C56,168 62,158 68,152L70,149.5L72.5,149L76,143.5L78.5,143L83.3,136.5L86,136L88.8,133.1C97,131.5 106,130.6 114.3,130.2Z M96.3,312.2C100,315 104,319 107.4,322.4L110,323.5L112,327.5L115,329.5L117.6,333.5L120.5,336L122.5,341L125.5,344.5L127.8,351.6L122,350L116.7,351.6L113,352.6L108,353.8L103.7,355.6L99,352.5L94,352.5L88.8,349.7L82,348L74,344L72,326Z"/>
<path stroke="#6e7a8f" stroke-width="1.5" stroke-linecap="round" fill="none" d="M62.5,87.8C64.8,89.6 71.7,95.5 76,98.7C80.3,101.9 86.2,105.5 88.3,106.8 M74,97C75.9,97.1 83.7,97.4 85.6,97.5 M70,93.5C70.3,95.1 71.7,101.4 72,103 M80,101.5C80.3,102.9 81.7,108.6 82,110 M51.6,177C55.5,174.2 67.3,165 75,160C82.7,155 94,149.3 97.8,147.2 M84.2,154.5C84,152.4 83.2,144.1 83,142 M72,162C71.7,160.3 70.3,153.7 70,152 M78,158C80.3,158 89.7,158 92,158 M66,166.5C68,166.8 76,167.8 78,168 M74.9,328.4C77.8,329.7 86.4,333.5 92,336C97.6,338.5 105.6,342 108.3,343.2 M80,331C81.8,330.4 88.9,328 90.7,327.4 M90,335C92,334.7 99.8,333.3 101.8,333 M86,333.5C86.7,335.1 89.3,341.4 90,343 M96,338C96.5,339.5 98.5,345.5 99,347"/>
<path stroke="#afcbc8" stroke-width="1.25" stroke-linecap="round" stroke-linejoin="round" fill="none" d="M66,52C68.7,52.7 75.7,54.6 82,56C88.3,57.4 96.6,59.9 104,60.5C111.4,61.1 122.8,59.8 126.5,59.6 M86,56.5C87.8,54.9 95,48.7 96.8,47.1 M108,60.5C109.9,58.9 117.6,52.5 119.5,50.9 M108,60.5C109.4,61.1 114.9,63.3 116.3,63.9 M86,57C87,58.3 89.9,62.1 92,65C94.1,67.9 97.6,72.8 98.7,74.4 M90,62C91.8,62.5 98.8,64.8 100.5,65.3 M92,66C91.1,66.9 87.3,70.7 86.4,71.6 M72,54C72.5,56.1 74.4,64.5 74.9,66.6 M110,61C110.8,63.2 114,71.8 114.8,74"/>
<circle cx="96.8" cy="47.1" r="3.9" fill="#ffffff"/>
<circle cx="119.5" cy="50.9" r="3.9" fill="#ffffff"/>
<circle cx="126.5" cy="59.6" r="3.9" fill="#ffffff"/>
<circle cx="116.3" cy="63.9" r="3.9" fill="#ffffff"/>
<circle cx="82" cy="56" r="3.9" fill="#ffffff"/>
<circle cx="100.5" cy="65.3" r="3.9" fill="#ffffff"/>
<circle cx="114.8" cy="74" r="3.9" fill="#ffffff"/>
<circle cx="98.7" cy="74.4" r="3.9" fill="#ffffff"/>
<circle cx="86.4" cy="71.6" r="3.9" fill="#ffffff"/>
<circle cx="74.9" cy="66.6" r="3.9" fill="#ffffff"/>
<circle cx="64.7" cy="60" r="3.9" fill="#ffffff"/>
<path stroke="#afcbc8" stroke-width="1.25" stroke-linecap="round" stroke-linejoin="round" fill="none" d="M95,261C98.2,260.2 108.9,257.1 114,256C119.1,254.9 123.5,254.8 125.4,254.6 M114,256C115,254.3 118.5,249.1 120,246C121.5,242.9 122.7,238.8 123.2,237.4 M116,254C118.1,256.3 126.7,265.7 128.8,268 M118,253C120.9,251.5 132.4,245.4 135.3,243.9 M96,268C97.8,267.4 105.2,265.2 107,264.6 M98,270C99.9,271.1 107.7,275.2 109.6,276.3"/>
<circle cx="123.2" cy="237.4" r="4.6" fill="#ffffff"/>
<circle cx="135.3" cy="243.9" r="4.6" fill="#ffffff"/>
<circle cx="125.4" cy="254.6" r="4.6" fill="#ffffff"/>
<circle cx="107" cy="264.6" r="4.6" fill="#ffffff"/>
<circle cx="128.8" cy="268" r="4.6" fill="#ffffff"/>
<circle cx="109.6" cy="276.3" r="4.6" fill="#ffffff"/>
<path stroke="#afcbc8" stroke-width="1.6" stroke-linecap="round" fill="none" d="M0,247L8,250"/>
<path fill="#fecb6e" d="M-5,-5L105,-5C104.9,-4.2 104.8,-3.3 104.6,0C104.4,3.3 104.5,9.7 103.7,14.6C102.9,19.5 101.9,24.8 100,29.4C98.1,34 95.3,39 92.5,42.4C89.7,45.8 86.7,47.6 83.3,49.8C79.9,52 76.7,51.2 72,55.4C67.3,59.6 61.2,71.7 55,75C48.8,78.3 40.8,77.7 35,75C29.2,72.3 23.4,62.9 20,59C16.6,55.1 15.8,54.2 14.6,51.7C13.4,49.2 13.9,46.6 12.7,44.3C11.4,42 9.2,39.3 7.1,37.8C5,36.2 2,35.5 0,35C-2,34.5 -4.2,35 -5,35L-5,35Z"/>
<path fill="#fecb6e" d="M20,100C24.2,97.7 33.3,96.8 40,97C46.7,97.2 55.3,99.2 60,101C64.7,102.8 66.2,105.2 68,108C69.8,110.8 70.4,114.9 70.5,118C70.6,121.1 68.1,123.1 68.5,126.6C68.9,130 73,134.2 73,138.7C73,143.2 70.9,149.5 68.4,153.6C65.9,157.7 61.9,160.6 58,163C54.1,165.4 49.7,167 45,168C40.3,169 34.5,170.2 30,169C25.5,167.8 21.7,164.5 18,161C14.3,157.5 10.1,152.7 8,148C5.9,143.3 5.3,137.7 5.3,133C5.3,128.3 6.5,123.7 8,120C9.6,116.3 12.6,114.2 14.6,110.9C16.6,107.6 15.8,102.3 20,100Z"/>
<path fill="#fecb6e" d="M-6,274C-4.4,269.9 -1.7,268.9 1.4,265.7C4.5,262.5 8.7,258.4 12.3,254.8C15.9,251.2 18.6,248.1 23.2,244C27.8,239.9 33.5,233 40,230C46.5,227 55.1,226.8 62,226C68.9,225.2 75.9,224.3 81.4,225.3C86.9,226.3 91.6,228.9 95,232C98.4,235.1 101,239.8 101.8,243.8C102.6,247.8 100.9,252.3 100,256C99.1,259.7 95.5,262.2 96.3,266C97.1,269.8 103.2,274.2 104.6,279C106,283.8 106,288.9 104.6,294.6C103.2,300.3 100.5,308.1 96.3,313C92.1,317.9 85.5,320.8 79.5,324C73.5,327.2 66.6,330.3 60,332C53.4,333.7 46,334.1 40,334C34,333.9 26.9,333.3 23.9,331.7C20.9,330.1 24.2,327.4 22,324.3C19.8,321.2 14.6,317.1 10.9,313C7.2,308.9 3.1,303.8 0,300C-3.1,296.2 -7,294.3 -8,290C-9,285.7 -7.6,278.1 -6,274Z"/>
<path fill="#793521" d="M32.4,-3C29.5,-0.3 32.5,3.2 32.8,6C33,8.8 33.4,11.3 33.9,13.5C34.4,15.7 34.9,17.6 36,19.3C37.1,21 38.2,22.7 40.5,23.8C42.8,24.9 46.8,26.1 49.8,26.2C52.8,26.3 56.2,25.3 58.5,24.3C60.8,23.3 62,21.6 63.5,20C65,18.4 66.3,16.6 67.3,14.6C68.3,12.6 69,10.1 69.5,8C70,5.9 70.1,3.8 70,2C69.9,0.2 72.3,-1 69,-3C65.7,-5 56.1,-10 50,-10C43.9,-10 35.3,-5.7 32.4,-3Z"/>
<path fill="#793521" d="M39.6,122C42.7,121.8 47,122.7 49,124.5C51,126.3 51.4,130.1 51.5,133C51.6,135.9 51.2,139.8 49.5,142C47.8,144.2 44.1,145.8 41,146C37.9,146.2 33.1,145.3 31,143.5C28.9,141.7 28.4,137.9 28.3,135C28.2,132.1 28.6,128.2 30.5,126C32.4,123.8 36.5,122.2 39.6,122Z"/>
<path fill="#793521" d="M53.6,256C57.1,256.3 62,256.8 65,260C68,263.2 71.3,270.7 71.8,275.4C72.3,280.1 70.6,284.9 68,288C65.4,291.1 60.2,293.7 56,294.2C51.8,294.7 46.3,293.5 43,291C39.7,288.5 37,283.2 36,279C35,274.8 35.7,269.5 37,266C38.3,262.5 41.2,259.7 44,258C46.8,256.3 50.1,255.7 53.6,256Z"/>
<path stroke="#ef6940" stroke-width="2.3" stroke-linecap="round" fill="none" d="M17.4,3.4C17.2,5.3 15.5,10.7 16,14.6C16.4,18.5 17.4,23.1 20.1,26.6C22.8,30.2 30.2,34.4 32.2,35.9 M26.6,1.2C26.8,3 27.7,10 27.9,11.8 M28.5,20.1C29.6,21.7 32.1,26.9 35,29.4C37.9,31.9 41.8,34.7 46.1,35C50.4,35.3 58.5,31.9 61,31.3 M46.1,41.5C48.6,41.2 56.4,41.6 61,39.6C65.7,37.6 70.5,33.6 74,29.4C77.5,25.2 80.8,18 82.3,14.6C83.8,11.2 82.8,9.9 82.9,9 M76.8,1.2C76.6,2.8 76.7,7.8 75.8,10.9C74.9,14.1 72,18.6 71.2,20.1 M89.8,1.2C89.5,3.4 89,11 87.9,14.6C86.8,18.2 84.1,21.5 83.3,22.9"/>
<path stroke="#ef6940" stroke-width="1.9" stroke-linecap="round" fill="none" d="M19.1,125.7C18.7,127.5 16.4,132.4 16.4,136.5C16.4,140.6 17.1,146.5 19.1,150.1C21.1,153.7 27,156.9 28.6,158.3 M25.9,123C25.4,124.8 23.2,130.4 23.2,133.8C23.2,137.2 25.4,141.7 25.9,143.3 M27.3,118.9C28.9,118.2 33.4,115.2 36.8,114.8C40.2,114.3 44.7,115.3 47.6,116.2C50.5,117.1 53.3,119.5 54.4,120.2 M57.1,125.7C57.8,127.3 61,132 61.2,135.2C61.4,138.4 60.1,142 58.5,144.7C56.9,147.4 52.8,150.4 51.7,151.5 M24.5,148.8C26.1,149.9 30.6,154.2 34,155.6C37.4,156.9 41.5,157.4 44.9,156.9C48.3,156.4 52.8,153.5 54.4,152.8 M60,118C60.8,119.7 64.1,124.7 65,128C65.9,131.3 65.4,136.3 65.5,138 M32,160.5C34.2,160.8 40.7,162.9 45,162.5C49.3,162.1 55.8,158.8 58,158"/>
<path stroke="#ef6940" stroke-width="2.5" stroke-linecap="round" fill="none" d="M21.8,257.5C21.4,259.8 19.3,266.6 19.1,271.1C18.9,275.6 18.9,280.2 20.5,284.7C22.1,289.2 25.4,294.7 28.6,298.3C31.8,301.9 37.7,305 39.5,306.4 M30,265.7C29.7,268 27.6,275.2 28,279.3C28.4,283.4 30.3,286.9 32.7,290.1C35.1,293.3 40.6,296.9 42.2,298.3 M31.3,257.5C33.6,256.4 39.9,252 44.9,250.7C49.9,249.3 56.2,248.7 61.2,249.4C66.2,250.1 72.5,253.9 74.8,254.8 M74.8,260.2C75.9,262.5 80.7,269.3 81.6,273.8C82.5,278.3 81.8,283.8 80.2,287.4C78.6,291 73.4,294.2 72.1,295.6 M84.3,265.7C85.2,268 89.6,274.3 89.8,279.3C90,284.3 88.2,291.3 85.7,295.6C83.2,299.9 79.3,302.7 74.8,305C70.3,307.3 61.2,308.5 58.5,309.2 M23.2,303.7C25.5,305.1 31.8,310.1 36.8,311.9C41.8,313.7 50.4,314.2 53.1,314.6"/>
<path fill="#ef6940" d="M42.4,78.3C41.3,78.4 39.4,70.6 38.2,67.5C37,64.3 35.9,62.2 35.1,59.5C34.4,56.9 33.6,53.9 33.6,51.5C33.6,49 34.2,46.4 35.2,44.7C36.2,43 38.2,41.5 39.8,41.4C41.4,41.3 43.6,42.5 44.8,44C46.1,45.5 47,48.1 47.4,50.5C47.7,53 47.4,55.9 47,58.7C46.6,61.4 45.8,63.7 45.1,67C44.3,70.3 43.5,78.2 42.4,78.3Z M42.4,78.3C41.4,77.8 43.8,70.3 44.4,67C45,63.7 45.2,61.4 45.9,58.7C46.6,56.1 47.5,53.2 48.8,51.2C50,49.1 51.9,47.2 53.6,46.3C55.4,45.4 57.8,45.2 59.3,45.9C60.7,46.7 61.9,48.8 62.2,50.7C62.5,52.7 62,55.3 61,57.5C60,59.8 58.2,62.1 56.4,64.2C54.7,66.3 52.9,67.8 50.5,70.2C48.2,72.5 43.4,78.8 42.4,78.3Z M42.4,78.3C41.9,77.3 48.2,73 50.5,70.8C52.9,68.6 54.4,66.9 56.5,65.4C58.6,63.8 60.9,62.1 63.1,61.3C65.3,60.5 67.8,60.1 69.7,60.6C71.6,61 73.6,62.3 74.2,63.8C74.9,65.3 74.6,67.7 73.7,69.3C72.8,71 70.9,72.7 68.8,73.8C66.8,75 64,75.6 61.4,76.2C58.8,76.7 56.6,76.7 53.4,77.1C50.2,77.4 42.9,79.3 42.4,78.3Z M42.4,78.3C42.5,77.2 50.8,76.5 54.2,75.8C57.6,75.1 60,74.4 62.8,74.1C65.7,73.7 68.8,73.4 71.4,73.8C73.9,74.2 76.5,75.2 78.1,76.5C79.7,77.7 80.9,79.9 80.8,81.5C80.6,83.1 79.1,85.1 77.3,86.1C75.5,87.1 72.8,87.6 70.2,87.6C67.6,87.5 64.6,86.7 61.9,85.9C59.1,85.1 56.9,84 53.6,82.7C50.4,81.4 42.3,79.4 42.4,78.3Z M42.4,78.3C43.2,77.4 49.2,81.1 52,82.3C54.7,83.4 56.8,84 58.9,85.2C61.1,86.4 63.4,87.7 64.9,89.3C66.4,90.9 67.6,92.9 67.9,94.7C68.1,96.5 67.6,98.9 66.6,100C65.5,101.2 63.2,102 61.4,101.9C59.6,101.8 57.4,100.8 55.7,99.5C53.9,98.2 52.4,96 51,94C49.6,92 48.8,90 47.3,87.4C45.9,84.8 41.6,79.2 42.4,78.3Z M42.4,78.3C43.5,78.1 46.4,85.5 48,88.5C49.6,91.4 50.9,93.4 52.1,96C53.2,98.5 54.3,101.3 54.6,103.8C54.9,106.2 54.7,108.9 53.9,110.7C53.1,112.5 51.4,114.2 49.8,114.6C48.2,114.9 45.9,114 44.5,112.6C43,111.3 41.8,108.9 41.1,106.5C40.4,104.1 40.4,101.1 40.4,98.3C40.4,95.6 40.9,93.2 41.2,89.9C41.6,86.5 41.3,78.5 42.4,78.3Z M42.4,78.3C43.5,78.7 42.3,85.9 42.2,88.9C42.1,92 42.3,94.2 42,96.7C41.7,99.2 41.3,101.9 40.4,104C39.5,106 38,107.9 36.4,108.9C34.8,109.9 32.5,110.3 30.9,109.8C29.4,109.2 27.9,107.4 27.3,105.6C26.7,103.9 26.8,101.4 27.4,99.2C28,97.1 29.5,94.8 30.9,92.6C32.2,90.5 33.8,89 35.7,86.6C37.6,84.2 41.3,77.9 42.4,78.3Z M42.4,78.3C42.9,79.3 36.5,84.2 34.1,86.6C31.7,89 30.1,90.9 28,92.7C25.8,94.5 23.4,96.4 21.1,97.4C18.8,98.4 16.2,99 14.2,98.8C12.2,98.5 10,97.3 9.3,95.9C8.5,94.5 8.8,92 9.7,90.2C10.6,88.5 12.5,86.6 14.7,85.2C16.8,83.9 19.7,83 22.4,82.2C25.1,81.4 27.5,81.2 30.8,80.5C34.2,79.9 41.9,77.3 42.4,78.3Z M42.4,78.3C42.3,79.4 34.5,79.8 31.3,80.4C28,81 25.8,81.7 23.1,81.9C20.4,82.2 17.5,82.4 15.1,81.9C12.8,81.4 10.3,80.4 8.9,79.1C7.5,77.7 6.5,75.5 6.7,73.9C6.9,72.3 8.4,70.4 10.1,69.5C11.8,68.5 14.4,68.1 16.8,68.2C19.2,68.3 22,69.2 24.5,70.1C27.1,71 29.1,72.2 32.1,73.6C35.1,74.9 42.5,77.2 42.4,78.3Z M42.4,78.3C41.5,79.1 36.1,74.8 33.5,73.3C30.9,71.9 29,71 27,69.6C25,68.2 22.9,66.7 21.7,65C20.4,63.2 19.5,61.1 19.4,59.3C19.4,57.4 20.2,55.2 21.4,54.1C22.6,53.1 25,52.6 26.7,52.9C28.5,53.2 30.5,54.4 32.1,55.9C33.6,57.4 34.9,59.7 36,61.8C37.1,64 37.6,66 38.7,68.8C39.8,71.5 43.3,77.5 42.4,78.3Z"/>
<circle cx="42.4" cy="78.3" r="16" fill="#ef6940"/>
<path fill="#fecb6e" stroke="#fecb6e" stroke-width="0.35" stroke-linejoin="round" d="M49.7,76.9L61.4,77.6L49.8,79.1ZM49.8,79L61.3,83L49.3,81.2ZM49.3,81.1L55.2,86L48.1,83ZM48.7,82.3L58.5,92.4L47.2,84ZM47.2,84L51.1,92.2L45.3,85.1ZM44.9,85.3L45.9,96.3L42.7,85.7ZM43.2,85.7L41.5,96.7L40.9,85.6ZM41.4,85.7L38,93.4L39.3,85.1ZM39.6,85.2L31.2,96.9L37.7,84ZM38,84.3L27.8,92.8L36.4,82.7ZM36.5,82.8L29.3,85.5L35.4,80.8ZM35.5,81L23.5,82.6L35,78.9ZM35.1,79.6L27.7,78.7L35,77.4ZM35.1,77.1L24.9,72.6L35.7,75ZM35.6,75.4L23.9,66.8L36.7,73.5ZM36.5,73.7L27.2,62.2L38.2,72.2ZM37.7,72.6L31.6,60.2L39.6,71.4ZM39.4,71.5L36.5,56.9L41.5,70.9ZM41.7,70.9L43.2,63.1L43.9,71ZM42.9,70.9L45.8,62.4L45,71.3ZM45.6,71.6L52.4,63.3L47.4,72.8ZM46.9,72.4L54.6,66.5L48.5,74ZM48.2,73.7L57.7,69.5L49.3,75.6ZM49.2,75.2L60.9,72.9L49.8,77.3Z"/>
<circle cx="42.4" cy="78.3" r="9.3" fill="#ffffff"/>
<circle cx="45.2" cy="74.1" r="1" fill="#a9c7c4"/>
<circle cx="47.5" cy="77.8" r="1" fill="#a9c7c4"/>
<circle cx="43.3" cy="78.3" r="1" fill="#a9c7c4"/>
<circle cx="45.7" cy="82" r="1" fill="#a9c7c4"/>
<circle cx="41.5" cy="82.5" r="1" fill="#a9c7c4"/>
<circle cx="39.1" cy="83.4" r="1" fill="#a9c7c4"/>
<circle cx="42.9" cy="85.3" r="1" fill="#a9c7c4"/>
<path fill="#ef6940" d="M43.3,208C41.7,208.1 38.9,197.6 37.1,193.3C35.3,189.1 33.8,186.2 32.7,182.6C31.5,179 30.4,175 30.3,171.6C30.3,168.2 31,164.6 32.5,162.3C33.9,160 36.6,157.9 38.9,157.7C41.2,157.5 44.2,159.1 46,161.1C47.9,163.2 49.2,166.6 49.8,169.9C50.3,173.3 49.9,177.3 49.4,181.1C48.9,184.9 47.8,188 46.8,192.5C45.8,197 44.9,207.9 43.3,208Z M43.3,208C41.9,207.2 45.6,197 46.6,192.6C47.5,188.1 47.9,184.9 49,181.3C50.2,177.7 51.5,173.8 53.4,171.1C55.2,168.3 57.9,165.8 60.4,164.8C62.9,163.7 66.3,163.6 68.3,164.7C70.3,165.8 71.9,168.9 72.2,171.6C72.5,174.3 71.7,177.8 70.2,180.8C68.8,183.8 66.1,186.9 63.6,189.7C61,192.4 58.4,194.4 55,197.4C51.6,200.5 44.7,208.8 43.3,208Z M43.3,208C42.7,206.5 52.2,200.5 55.8,197.4C59.4,194.4 61.7,192 64.9,189.7C68.1,187.5 71.6,185.1 74.9,184C78.2,182.9 82,182.4 84.7,183C87.4,183.6 90.3,185.6 91.2,187.7C92.1,189.8 91.4,193.2 90,195.6C88.6,198 85.6,200.3 82.5,201.9C79.4,203.5 75.3,204.4 71.5,205.2C67.6,205.9 64.3,205.9 59.6,206.4C54.9,206.9 43.9,209.5 43.3,208Z M43.3,208C43.5,206.4 53.4,205.7 57.4,204.8C61.5,203.9 64.4,203 67.8,202.6C71.2,202.2 74.9,201.8 77.9,202.4C80.9,203.1 83.9,204.5 85.7,206.3C87.4,208.2 88.7,211.3 88.5,213.5C88.2,215.8 86.2,218.5 84,219.9C81.9,221.2 78.6,221.9 75.5,221.8C72.5,221.7 69,220.4 65.8,219.2C62.5,218 60,216.4 56.3,214.5C52.5,212.6 43.1,209.6 43.3,208Z M43.3,208C44.4,206.8 52.9,212.7 56.9,214.6C60.8,216.5 63.7,217.5 66.8,219.4C69.8,221.3 73.1,223.4 75.1,225.8C77.2,228.2 78.8,231.3 79.2,233.9C79.5,236.5 78.7,239.8 77.1,241.4C75.5,243 72.2,243.9 69.6,243.6C67,243.3 63.9,241.7 61.4,239.7C59,237.6 56.9,234.4 55,231.3C53.1,228.3 51.9,225.4 50,221.5C48.1,217.6 42.2,209.2 43.3,208Z M43.3,208C44.9,207.8 48,217.8 49.9,221.8C51.8,225.8 53.5,228.6 54.7,232C55.9,235.4 57.2,239.2 57.4,242.4C57.5,245.7 56.9,249.2 55.5,251.5C54.2,253.7 51.5,255.9 49.2,256.1C47,256.4 43.8,255 42,253.1C40.1,251.2 38.6,248 38,244.8C37.3,241.6 37.7,237.7 38.1,234.1C38.4,230.4 39.4,227.4 40.2,223C41.1,218.7 41.7,208.2 43.3,208Z M43.3,208C44.9,208.5 43.4,219.6 43.4,224.3C43.4,229.1 43.8,232.4 43.4,236.3C43.1,240.2 42.6,244.4 41.4,247.6C40.1,250.9 38.1,254.1 35.8,255.7C33.6,257.4 30.3,258.4 28.1,257.7C25.9,257.1 23.7,254.4 22.8,251.8C21.9,249.1 22,245.3 22.7,241.9C23.5,238.6 25.5,234.8 27.4,231.4C29.3,228 31.4,225.4 34.1,221.5C36.7,217.6 41.7,207.5 43.3,208Z M43.3,208C43.9,209.5 34.3,215.4 30.7,218.4C27,221.3 24.6,223.7 21.4,225.9C18.1,228.1 14.6,230.4 11.3,231.5C8,232.5 4.2,232.9 1.5,232.2C-1.2,231.6 -4.1,229.6 -4.9,227.5C-5.8,225.4 -5.1,221.9 -3.6,219.6C-2.1,217.2 0.9,214.9 4,213.4C7.1,211.8 11.2,211 15.1,210.4C18.9,209.7 22.3,209.7 27,209.3C31.7,208.9 42.7,206.5 43.3,208Z M43.3,208C43.1,209.6 32.3,210 27.8,210.7C23.3,211.5 20.1,212.4 16.4,212.7C12.6,213 8.6,213.2 5.3,212.5C2,211.8 -1.3,210.3 -3.2,208.4C-5.1,206.4 -6.5,203.3 -6.2,201C-5.9,198.8 -3.7,196.1 -1.3,194.8C1.1,193.5 4.7,193 8,193.2C11.4,193.4 15.2,194.8 18.7,196.1C22.2,197.4 25,199.1 29.1,201.1C33.2,203.1 43.5,206.4 43.3,208Z M43.3,208C42.1,209.1 33.6,202.8 29.7,200.7C25.7,198.5 22.8,197.3 19.7,195.2C16.6,193.2 13.4,190.9 11.3,188.4C9.2,185.8 7.6,182.6 7.4,179.9C7.1,177.3 8,174 9.6,172.4C11.3,170.8 14.6,170.1 17.3,170.6C19.9,171 23,172.8 25.5,175C27.9,177.2 30,180.6 31.9,183.7C33.8,186.9 34.8,189.9 36.7,194C38.6,198 44.5,206.9 43.3,208Z"/>
<circle cx="43.3" cy="208" r="22.8" fill="#ef6940"/>
<path fill="#fecb6e" stroke="#fecb6e" stroke-width="0.35" stroke-linejoin="round" d="M53.6,206.6L76.7,208.6L53.6,209.7ZM53.6,209.6L77.4,218.7L52.7,212.6ZM52.9,212.1L73.4,226.8L51.2,214.8ZM52.1,213.6L66,227.9L50,215.9ZM49.3,216.5L57.7,236.9L46.5,217.9ZM46.9,217.7L48.6,233.5L43.9,218.4ZM44.9,218.3L43.4,235.6L41.8,218.3ZM42.1,218.3L35,238.3L39.1,217.5ZM40.2,217.9L31.3,232.5L37.4,216.6ZM37.4,216.6L19,233.8L35.1,214.4ZM34.9,214.2L19.8,220.4L33.5,211.4ZM33.6,211.8L17.6,213.8L32.9,208.7ZM33,209.4L17.1,207.6L33,206.3ZM32.9,207.6L9,201.3L33.5,204.5ZM33.5,204.6L19.2,195.4L34.9,201.8ZM35.4,201.3L20.3,181.7L37.7,199.2ZM36.6,200.1L24.4,177.4L39.2,198.4ZM39.2,198.4L35,176.4L42.2,197.7ZM41.3,197.8L41.8,172.3L44.4,197.7ZM44.7,197.7L53.5,173.5L47.7,198.6ZM47.6,198.5L58.7,184.4L50.2,200.2ZM49.3,199.5L61.8,188.8L51.5,201.7ZM51.1,201.1L64.7,194.2L52.8,203.7ZM52.7,203.6L73.7,198.9L53.6,206.6Z"/>
<circle cx="43.3" cy="208" r="13" fill="#ffffff"/>
<circle cx="47.2" cy="202.2" r="1.4" fill="#a9c7c4"/>
<circle cx="50.4" cy="207.3" r="1.4" fill="#a9c7c4"/>
<circle cx="44.6" cy="208" r="1.4" fill="#a9c7c4"/>
<circle cx="47.8" cy="213.2" r="1.4" fill="#a9c7c4"/>
<circle cx="42" cy="213.8" r="1.4" fill="#a9c7c4"/>
<circle cx="38.8" cy="215.2" r="1.4" fill="#a9c7c4"/>
<circle cx="43.9" cy="217.8" r="1.4" fill="#a9c7c4"/>
<path fill="#ef6940" d="M38.7,376.6C37.3,377.8 29.1,371.4 25.2,369.3C21.3,367.1 18.3,365.9 15.3,363.8C12.4,361.8 9.2,359.4 7.3,356.8C5.4,354.2 4.1,351 4,348.2C4,345.5 5.3,342 7.2,340.4C9.1,338.7 12.7,337.9 15.4,338.3C18.1,338.7 21.2,340.5 23.5,342.7C25.8,345 27.7,348.5 29.3,351.7C30.9,354.9 31.7,358.1 33.3,362.2C34.9,366.4 40.1,375.4 38.7,376.6Z M38.7,376.6C36.9,376.6 35.2,365.4 33.7,360.9C32.3,356.3 31,353.2 30.2,349.3C29.4,345.5 28.6,341.3 29,337.9C29.3,334.4 30.6,330.8 32.4,328.6C34.3,326.4 37.6,324.6 40.1,324.6C42.6,324.7 45.7,326.7 47.5,329C49.2,331.3 50.3,334.9 50.5,338.4C50.6,341.9 49.6,346 48.6,349.8C47.7,353.6 46.1,356.7 44.5,361.1C42.8,365.6 40.5,376.6 38.7,376.6Z M38.7,376.6C37.1,375.7 40.9,364.5 41.8,359.5C42.7,354.6 43,351 44.2,347C45.3,343.1 46.6,338.8 48.6,335.7C50.6,332.6 53.4,329.8 56.1,328.5C58.9,327.3 62.7,327 64.9,328.2C67.1,329.4 68.9,332.7 69.4,335.7C69.8,338.6 69,342.5 67.5,345.9C66,349.3 63.1,352.7 60.4,355.8C57.7,359 54.9,361.2 51.3,364.6C47.7,368.1 40.3,377.5 38.7,376.6Z M38.7,376.6C38,375 48,368.5 51.8,365.2C55.6,361.9 58.1,359.3 61.4,356.9C64.8,354.5 68.5,352 72,350.8C75.5,349.6 79.4,349.2 82.3,349.9C85.2,350.6 88.3,352.8 89.3,355.1C90.3,357.4 89.7,361.2 88.2,363.8C86.7,366.3 83.6,368.9 80.4,370.6C77.1,372.3 72.7,373.2 68.6,373.9C64.6,374.7 61,374.7 56,375.1C51,375.5 39.4,378.2 38.7,376.6Z M38.7,376.6C38.7,374.8 51.7,373 56.9,371.5C62.2,370.1 65.9,368.7 70.3,367.9C74.8,367.1 79.6,366.3 83.7,366.6C87.7,367 91.9,368.2 94.5,370C97.1,371.9 99.2,375.1 99.2,377.7C99.1,380.2 96.9,383.3 94.2,385.1C91.6,386.8 87.3,387.9 83.3,388.1C79.2,388.3 74.4,387.4 70,386.4C65.6,385.4 62,383.9 56.8,382.3C51.5,380.7 38.7,378.4 38.7,376.6Z M38.7,376.6C39.7,375.1 50.5,380.2 55.3,381.7C60.1,383.1 63.6,383.9 67.4,385.4C71.2,387 75.4,388.8 78.2,391.1C81,393.5 83.5,396.6 84.5,399.5C85.4,402.3 85.2,406.1 83.8,408.1C82.3,410.2 78.8,411.7 75.8,411.8C72.9,411.9 69,410.6 65.9,408.8C62.7,406.9 59.6,403.6 56.8,400.6C54,397.5 52.2,394.5 49.1,390.5C46.1,386.5 37.7,378.1 38.7,376.6Z M38.7,376.6C40.4,376 46,385.3 48.9,388.9C51.8,392.4 54.2,394.7 56.3,397.9C58.4,401 60.6,404.5 61.5,407.7C62.3,410.9 62.4,414.6 61.5,417.3C60.6,419.9 58.2,422.7 55.8,423.6C53.4,424.4 49.8,423.8 47.4,422.4C44.9,421 42.7,418.1 41.3,415C39.8,412 39.3,407.9 38.9,404.2C38.5,400.4 38.8,397.1 38.8,392.5C38.7,387.9 37,377.2 38.7,376.6Z M38.7,376.6C40.4,377.2 38.7,387.9 38.6,392.5C38.6,397.1 38.9,400.4 38.5,404.2C38.1,407.9 37.6,412 36.1,415C34.7,418.1 32.5,421 30,422.4C27.6,423.8 24,424.4 21.6,423.6C19.2,422.7 16.8,419.9 15.9,417.3C15,414.6 15.1,410.9 15.9,407.7C16.8,404.5 19,401 21.1,397.9C23.2,394.7 25.6,392.4 28.5,388.9C31.4,385.3 37,376 38.7,376.6Z M38.7,376.6C39.6,378.2 31.4,385.3 28.4,388.8C25.4,392.3 23.5,395 20.8,397.6C18.1,400.2 15.1,403 12,404.4C9,405.8 5.4,406.6 2.6,406.1C-0.1,405.6 -3.3,403.8 -4.6,401.6C-5.9,399.4 -5.9,395.7 -4.9,393.1C-3.9,390.4 -1.5,387.7 1.3,385.8C4,383.9 7.9,382.7 11.6,381.6C15.2,380.5 18.5,380.3 23,379.4C27.5,378.6 37.8,375 38.7,376.6Z M38.7,376.6C38.4,378.4 27.5,378.5 23,379.3C18.5,380.1 15.3,380.9 11.5,381.2C7.7,381.4 3.6,381.6 0.4,380.8C-2.8,379.9 -6.1,378.2 -7.9,376C-9.7,373.9 -11,370.4 -10.5,367.9C-10.1,365.4 -7.7,362.6 -5.3,361.2C-2.8,359.8 0.8,359.3 4.1,359.6C7.5,359.9 11.2,361.5 14.7,363C18.2,364.5 20.9,366.4 24.9,368.7C28.9,371 39,374.8 38.7,376.6Z"/>
<circle cx="38.7" cy="376.6" r="24" fill="#ef6940"/>
<path fill="#fecb6e" stroke="#fecb6e" stroke-width="0.35" stroke-linejoin="round" d="M50.1,374.6L68.2,375.9L50.2,378.1ZM50.2,378.1L66.1,384.6L49.2,381.5ZM49.5,380.9L66.6,392.9L47.7,383.9ZM48.4,382.9L64.3,399.2L46.1,385.5ZM46.5,385.2L57.1,404.2L43.6,387.1ZM44,386.9L47.8,403.9L40.7,388ZM40.6,388.1L39.1,414.9L37.1,388.1ZM38,388.2L32.4,406.4L34.6,387.5ZM34.3,387.3L18.1,410.8L31.3,385.5ZM31.7,385.9L15.3,399.5L29.3,383.4ZM29.2,383.2L13.4,389L27.6,380.1ZM27.9,380.7L8.1,383.2L27.1,377.3ZM27.3,378.9L9.6,378L27.2,375.4ZM27.1,375.6L1.6,367.7L27.9,372.2ZM27.7,372.9L7.5,360.4L29.3,369.8ZM29.5,369.5L16.2,353.2L32,367.1ZM31.5,367.5L24.7,351.9L34.5,365.8ZM33.4,366.3L29.1,347.9L36.7,365.2ZM37.3,365.1L39.5,343.5L40.7,365.2ZM39.7,365L46.9,342.4L43.1,365.9ZM42.9,365.8L54.3,349.3L45.9,367.5ZM46,367.6L65.7,351.8L48.3,370.1ZM47.5,369L68.4,358L49.3,372ZM49.3,372L76.4,366.6L50.2,375.3Z"/>
<circle cx="38.7" cy="376.6" r="14.5" fill="#ffffff"/>
<circle cx="43.1" cy="370.1" r="1.6" fill="#a9c7c4"/>
<circle cx="46.7" cy="375.9" r="1.6" fill="#a9c7c4"/>
<circle cx="40.2" cy="376.6" r="1.6" fill="#a9c7c4"/>
<circle cx="43.8" cy="382.4" r="1.6" fill="#a9c7c4"/>
<circle cx="37.2" cy="383.1" r="1.6" fill="#a9c7c4"/>
<circle cx="33.6" cy="384.6" r="1.6" fill="#a9c7c4"/>
<circle cx="39.4" cy="387.5" r="1.6" fill="#a9c7c4"/>
<path stroke="#afcbc8" stroke-width="1.25" stroke-linecap="round" stroke-linejoin="round" fill="none" d="M0,313C1.3,313.2 4.7,313.2 8,314C11.3,314.8 14.9,315.8 19.6,317.8C24.3,319.8 30.9,323 36,326C41.1,329 45.8,333.7 50,336C54.2,338.3 59.5,339.3 61.4,340 M8,314C7.6,311.2 6.1,300.2 5.7,297.4 M9,313C11.1,310.9 19.3,302.6 21.4,300.5 M2,314C2.3,315.8 2.9,321.8 4,325C5.1,328.2 7.8,331.8 8.6,333.2 M30,318C31.2,315.9 36,307.8 37.2,305.7 M28,318.5C32.1,317.8 48.5,314.8 52.6,314 M22,320C22.8,323.3 25.8,336.7 26.6,340 M40,328C41,327.4 45.1,325.2 46.1,324.6 M50,336C53.1,334.7 65.7,329.7 68.8,328.4 M50,336C50.6,339.3 53,352.5 53.6,355.8 M56,338C58,340.6 66,350.8 68,353.4"/>
<circle cx="5.7" cy="297.4" r="5.2" fill="#ffffff"/>
<circle cx="21.4" cy="300.5" r="5.2" fill="#ffffff"/>
<circle cx="37.2" cy="305.7" r="5.2" fill="#ffffff"/>
<circle cx="52.6" cy="314" r="5.2" fill="#ffffff"/>
<circle cx="19.6" cy="317.8" r="5.2" fill="#ffffff"/>
<circle cx="46.1" cy="324.6" r="5.2" fill="#ffffff"/>
<circle cx="68.8" cy="328.4" r="5.2" fill="#ffffff"/>
<circle cx="8.6" cy="333.2" r="5.2" fill="#ffffff"/>
<circle cx="26.6" cy="340" r="5.2" fill="#ffffff"/>
<circle cx="61.4" cy="340" r="5.2" fill="#ffffff"/>
<circle cx="53.6" cy="355.8" r="5.2" fill="#ffffff"/>
<circle cx="68" cy="353.4" r="5.2" fill="#ffffff"/>
</g></svg>
<div class="t1" style="left:166.4px;top:39.7px;font-size:24.4px;letter-spacing:0.42px;transform:scaleX(0.93)">CERTIFICATE OF</div>
<div class="t1" style="left:166.4px;top:68.8px;font-size:24.4px;letter-spacing:0.66px;transform:scaleX(0.93)">APPRECIATION</div>
<div class="t2" style="left:166.3px;top:148.2px;font-size:10px;letter-spacing:1.35px;transform:scaleX(0.9)">THIS IS PRESENTED TO</div>
<div class="nm" style="left:165.3px;top:172.2px;font-size:41px;letter-spacing:0.1px">Roxanne Miller</div>
<div class="bd" style="left:166px;top:220px;font-size:8.4px;letter-spacing:-0.235px">for being a guest speaker at the</div>
<div class="bd" style="left:166px;top:232px;font-size:8.4px;letter-spacing:-0.14px">Where I Bloom workshop held last Oct. 13, 2020.</div>
<div class="sg" style="left:166.3px;top:316.4px;font-size:9.8px;letter-spacing:0.3px">Isabel Mercado</div>
<div class="rl" style="left:166.3px;top:329.7px;font-size:7.7px;letter-spacing:0px;transform:scaleX(0.905)">EVENT ORGANIZER</div>
<div class="sg" style="left:342.9px;top:316.4px;font-size:9.8px;letter-spacing:0.3px">Mary Kyla Eden</div>
<div class="rl" style="left:342.9px;top:329.7px;font-size:7.7px;letter-spacing:0px;transform:scaleX(0.905)">HEAD FLORIST</div>
</div></div>
<div id="addpage">+ Add page</div>
<div id="bottom"><div style="position:absolute;left:-.8px;top:0">
<svg width="40" height="12" viewBox="0 0 40 12" style="position:absolute;left:0;top:0.4px"><rect x="5.6" y="3" width="7.6" height="8" rx="1.4" fill="#fff" stroke="#8a8e94" stroke-width="1.1"/><rect x="6.4" y="3.8" width="6" height="6.6" rx="1" fill="none" stroke="#3a3e44" stroke-width=".9"/><path d="M9.4,5.4V9" stroke="#1d2024" stroke-width=".9"/><path d="M23,4.6H27.6Q28.6,4.6 28.6,5.6V8.4L26.4,10.6H23Q22,10.6 22,9.6V5.6Q22,4.6 23,4.6Z" fill="#fff" stroke="#3a3e44" stroke-width=".9" stroke-linejoin="round"/></svg>
<div style="position:absolute;left:449.3px;top:7.2px;width:66.3px;height:.6px;background:#c9ccd0"></div>
<div style="position:absolute;left:449.3px;top:7.1px;width:26px;height:.8px;background:#1d2024"></div>
<div style="position:absolute;left:472.9px;top:5px;width:5px;height:5px;border-radius:50%;background:#14171b"></div>
<span>124%</span>
<svg width="34" height="12" viewBox="0 0 34 12" style="position:absolute;left:551px;top:0.4px"><path d="M2.6,9.6L8.4,4M6.2,3.8H8.6V6.2M2.4,7.4V9.8H4.8" fill="none" stroke="#1d2024" stroke-width=".9" stroke-linecap="round" stroke-linejoin="round"/><path d="M14.7,1V11.6" stroke="#d5d8dc" stroke-width=".6"/><circle cx="24.4" cy="7.1" r="3.6" fill="none" stroke="#1d2024" stroke-width=".8"/></svg>
<span style="left:574.2px;top:3.7px;font-size:5px">?</span>
</div></div>
</body>
</html>
